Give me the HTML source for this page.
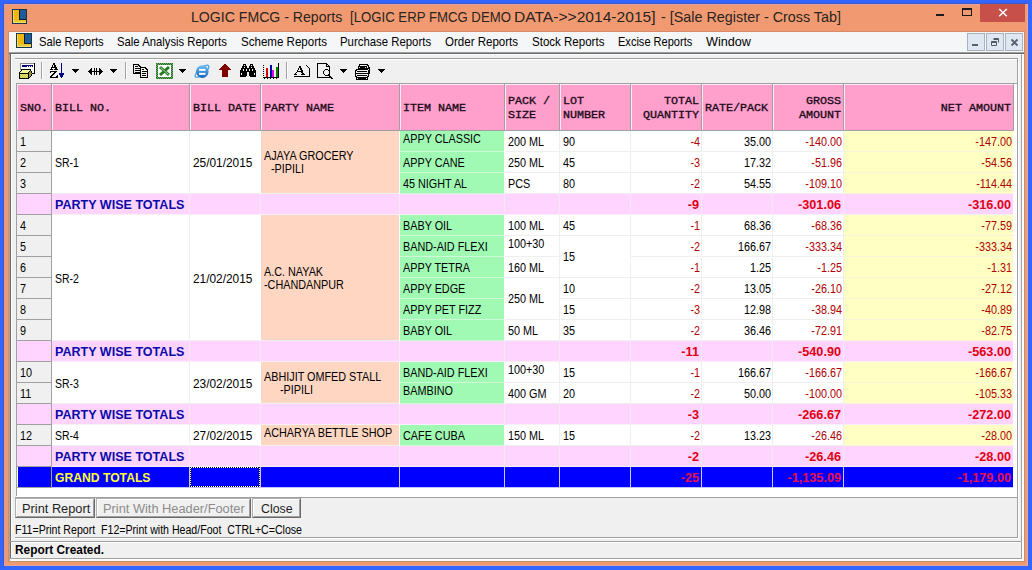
<!DOCTYPE html>
<html><head><meta charset="utf-8"><style>
html,body{margin:0;padding:0;width:1032px;height:570px;overflow:hidden;position:relative;}
body{font-family:'Liberation Sans', sans-serif;}
</style></head><body>
<div style="position:absolute;left:0px;top:0px;width:1032px;height:570px;background:#3366ff"></div>
<div style="position:absolute;left:4px;top:4px;width:1024px;height:562px;background:#f19a72"></div>
<div style="position:absolute;left:3px;top:3px;width:1026px;height:1px;background:#3c5ccc"></div>
<div style="position:absolute;left:3px;top:3px;width:1px;height:564px;background:#3c5ccc"></div>
<div style="position:absolute;left:4px;top:4px;width:1024px;height:1px;background:#e0a0a8"></div>
<div style="position:absolute;left:4px;top:4px;width:1px;height:562px;background:#d89aa8"></div>
<div style="position:absolute;left:1027px;top:4px;width:1px;height:562px;background:#e8a8a0"></div>
<div style="position:absolute;left:4px;top:565px;width:1024px;height:1px;background:#e0a8a8"></div>
<div style="position:absolute;left:190.6px;top:8.06px;line-height:17px;font-family:'Liberation Sans', sans-serif;font-size:15.4px;font-weight:normal;color:#2a2420;white-space:pre;transform:scaleX(0.9161);transform-origin:0 0;">LOGIC FMCG - Reports</div>
<div style="position:absolute;left:349.5px;top:8.06px;line-height:17px;font-family:'Liberation Sans', sans-serif;font-size:15.4px;font-weight:normal;color:#2a2420;white-space:pre;transform:scaleX(0.8567);transform-origin:0 0;">[LOGIC ERP FMCG DEMO </div>
<div style="position:absolute;left:514.0px;top:8.06px;line-height:17px;font-family:'Liberation Sans', sans-serif;font-size:15.4px;font-weight:normal;color:#2a2420;white-space:pre;transform:scaleX(1.0132);transform-origin:0 0;">DATA-&gt;&gt;2014-2015]</div>
<div style="position:absolute;left:660.6px;top:8.06px;line-height:17px;font-family:'Liberation Sans', sans-serif;font-size:15.4px;font-weight:normal;color:#2a2420;white-space:pre;transform:scaleX(0.9325);transform-origin:0 0;">- [Sale Register - Cross Tab]</div>
<div style="position:absolute;left:936px;top:14px;width:8px;height:2px;background:#1a1a1a"></div>
<div style="position:absolute;left:962px;top:8px;width:10px;height:8px;border:1px solid #1a1a1a;box-sizing:border-box;border-top-width:2px"></div>
<div style="position:absolute;left:980px;top:4px;width:45px;height:18px;background:#c8504a"></div>
<svg style="position:absolute;left:998px;top:8px" width="10" height="9" viewBox="0 0 10 9"><path d="M1.2 1 L8.8 8.2 M8.8 1 L1.2 8.2" stroke="#fff" stroke-width="1.5"/></svg>
<div style="position:absolute;left:8px;top:31px;width:1016px;height:1px;background:#d98a68"></div>
<div style="position:absolute;left:9px;top:32px;width:1015px;height:20px;background:#f5f6f7"></div>
<div style="position:absolute;left:38.5px;top:35.36px;line-height:14px;font-family:'Liberation Sans', sans-serif;font-size:12.8px;font-weight:normal;color:#000000;white-space:pre;transform:scaleX(0.8732);transform-origin:0 0;">Sale Reports</div>
<div style="position:absolute;left:116.9px;top:35.36px;line-height:14px;font-family:'Liberation Sans', sans-serif;font-size:12.8px;font-weight:normal;color:#000000;white-space:pre;transform:scaleX(0.8828);transform-origin:0 0;">Sale Analysis Reports</div>
<div style="position:absolute;left:240.5px;top:35.36px;line-height:14px;font-family:'Liberation Sans', sans-serif;font-size:12.8px;font-weight:normal;color:#000000;white-space:pre;transform:scaleX(0.9023);transform-origin:0 0;">Scheme Reports</div>
<div style="position:absolute;left:340.0px;top:35.36px;line-height:14px;font-family:'Liberation Sans', sans-serif;font-size:12.8px;font-weight:normal;color:#000000;white-space:pre;transform:scaleX(0.8893);transform-origin:0 0;">Purchase Reports</div>
<div style="position:absolute;left:445.2px;top:35.36px;line-height:14px;font-family:'Liberation Sans', sans-serif;font-size:12.8px;font-weight:normal;color:#000000;white-space:pre;transform:scaleX(0.9016);transform-origin:0 0;">Order Reports</div>
<div style="position:absolute;left:531.7px;top:35.36px;line-height:14px;font-family:'Liberation Sans', sans-serif;font-size:12.8px;font-weight:normal;color:#000000;white-space:pre;transform:scaleX(0.9008);transform-origin:0 0;">Stock Reports</div>
<div style="position:absolute;left:617.7px;top:35.36px;line-height:14px;font-family:'Liberation Sans', sans-serif;font-size:12.8px;font-weight:normal;color:#000000;white-space:pre;transform:scaleX(0.8633);transform-origin:0 0;">Excise Reports</div>
<div style="position:absolute;left:705.6px;top:35.36px;line-height:14px;font-family:'Liberation Sans', sans-serif;font-size:12.8px;font-weight:normal;color:#000000;white-space:pre;transform:scaleX(0.9865);transform-origin:0 0;">Window</div>
<div style="position:absolute;left:967px;top:33px;width:18px;height:18px;background:#dfe8f2;border:1px solid #a9b3bf;box-sizing:border-box"></div>
<div style="position:absolute;left:986px;top:33px;width:18px;height:18px;background:#dfe8f2;border:1px solid #a9b3bf;box-sizing:border-box"></div>
<div style="position:absolute;left:1005px;top:33px;width:18px;height:18px;background:#dfe8f2;border:1px solid #a9b3bf;box-sizing:border-box"></div>
<div style="position:absolute;left:972px;top:44px;width:6px;height:2px;background:#566070"></div>
<svg style="position:absolute;left:990px;top:37px" width="10" height="10" viewBox="0 0 10 10"><path d="M3.5 1.5 H8.5 V5.5 M1.5 4.5 H6.5 V8.5 H1.5 Z M1.5 5.5 H6.5 M3.5 2.5 H8.5" fill="none" stroke="#505a66" stroke-width="1"/></svg>
<svg style="position:absolute;left:1010px;top:38px" width="9" height="9" viewBox="0 0 9 9"><path d="M1.5 1.5 L7.5 7.5 M7.5 1.5 L1.5 7.5" stroke="#566070" stroke-width="1.8"/></svg>
<div style="position:absolute;left:8px;top:52px;width:1016px;height:510px;background:#f0f0f0"></div>
<div style="position:absolute;left:8px;top:31px;width:1px;height:531px;background:#c89070"></div>
<div style="position:absolute;left:9px;top:53px;width:1px;height:509px;background:#b4a49a"></div>
<div style="position:absolute;left:1024px;top:31px;width:1px;height:531px;background:#c89070"></div>
<div style="position:absolute;left:8px;top:561px;width:1017px;height:1px;background:#c89070"></div>
<div style="position:absolute;left:8px;top:52px;width:1016px;height:1px;background:#a0a0a0"></div>
<div style="position:absolute;left:9px;top:53px;width:1015px;height:1px;background:#696969"></div>
<div style="position:absolute;left:10px;top:53px;width:1px;height:506px;background:#696969"></div>
<div style="position:absolute;left:11px;top:54px;width:1px;height:504px;background:#ffffff"></div>
<div style="position:absolute;left:11px;top:54px;width:1013px;height:1px;background:#ffffff"></div>
<div style="position:absolute;left:1021px;top:54px;width:1px;height:505px;background:#a0a0a0"></div>
<div style="position:absolute;left:1022px;top:54px;width:2px;height:507px;background:#ffffff"></div>
<div style="position:absolute;left:10px;top:558px;width:1012px;height:1px;background:#a0a0a0"></div>
<div style="position:absolute;left:10px;top:559px;width:1014px;height:2px;background:#ffffff"></div>
<div style="position:absolute;left:15px;top:58px;width:1002px;height:1px;background:#a0a0a0"></div>
<div style="position:absolute;left:15px;top:59px;width:1002px;height:1px;background:#ffffff"></div>
<div style="position:absolute;left:1017px;top:58px;width:1px;height:480px;background:#a0a0a0"></div>
<div style="position:absolute;left:1018px;top:58px;width:1px;height:481px;background:#ffffff"></div>
<div style="position:absolute;left:15px;top:537px;width:1003px;height:1px;background:#a0a0a0"></div>
<div style="position:absolute;left:15px;top:538px;width:1003px;height:1px;background:#ffffff"></div>
<div style="position:absolute;left:16px;top:83px;width:1001px;height:414px;background:#ffffff"></div>
<div style="position:absolute;left:16px;top:83px;width:1001px;height:1px;background:#a0a0a0"></div>
<div style="position:absolute;left:16px;top:83px;width:1px;height:413px;background:#a0a0a0"></div>
<div style="position:absolute;left:15px;top:497px;width:1002px;height:1px;background:#a0a0a0"></div>
<div style="position:absolute;left:17px;top:84px;width:34px;height:46px;background:#ffa0cc"></div>
<div style="position:absolute;left:17px;top:84px;width:34px;height:1px;background:#ffe9f4"></div>
<div style="position:absolute;left:17px;top:84px;width:1px;height:46px;background:#ffe9f4"></div>
<div style="position:absolute;left:51px;top:83px;width:1px;height:48px;background:#a0a0a0"></div>
<div style="position:absolute;left:52px;top:84px;width:137px;height:46px;background:#ffa0cc"></div>
<div style="position:absolute;left:52px;top:84px;width:137px;height:1px;background:#ffe9f4"></div>
<div style="position:absolute;left:52px;top:84px;width:1px;height:46px;background:#ffe9f4"></div>
<div style="position:absolute;left:189px;top:83px;width:1px;height:48px;background:#a0a0a0"></div>
<div style="position:absolute;left:190px;top:84px;width:70px;height:46px;background:#ffa0cc"></div>
<div style="position:absolute;left:190px;top:84px;width:70px;height:1px;background:#ffe9f4"></div>
<div style="position:absolute;left:190px;top:84px;width:1px;height:46px;background:#ffe9f4"></div>
<div style="position:absolute;left:260px;top:83px;width:1px;height:48px;background:#a0a0a0"></div>
<div style="position:absolute;left:261px;top:84px;width:138px;height:46px;background:#ffa0cc"></div>
<div style="position:absolute;left:261px;top:84px;width:138px;height:1px;background:#ffe9f4"></div>
<div style="position:absolute;left:261px;top:84px;width:1px;height:46px;background:#ffe9f4"></div>
<div style="position:absolute;left:399px;top:83px;width:1px;height:48px;background:#a0a0a0"></div>
<div style="position:absolute;left:400px;top:84px;width:104px;height:46px;background:#ffa0cc"></div>
<div style="position:absolute;left:400px;top:84px;width:104px;height:1px;background:#ffe9f4"></div>
<div style="position:absolute;left:400px;top:84px;width:1px;height:46px;background:#ffe9f4"></div>
<div style="position:absolute;left:504px;top:83px;width:1px;height:48px;background:#a0a0a0"></div>
<div style="position:absolute;left:505px;top:84px;width:54px;height:46px;background:#ffa0cc"></div>
<div style="position:absolute;left:505px;top:84px;width:54px;height:1px;background:#ffe9f4"></div>
<div style="position:absolute;left:505px;top:84px;width:1px;height:46px;background:#ffe9f4"></div>
<div style="position:absolute;left:559px;top:83px;width:1px;height:48px;background:#a0a0a0"></div>
<div style="position:absolute;left:560px;top:84px;width:70px;height:46px;background:#ffa0cc"></div>
<div style="position:absolute;left:560px;top:84px;width:70px;height:1px;background:#ffe9f4"></div>
<div style="position:absolute;left:560px;top:84px;width:1px;height:46px;background:#ffe9f4"></div>
<div style="position:absolute;left:630px;top:83px;width:1px;height:48px;background:#a0a0a0"></div>
<div style="position:absolute;left:631px;top:84px;width:70px;height:46px;background:#ffa0cc"></div>
<div style="position:absolute;left:631px;top:84px;width:70px;height:1px;background:#ffe9f4"></div>
<div style="position:absolute;left:631px;top:84px;width:1px;height:46px;background:#ffe9f4"></div>
<div style="position:absolute;left:701px;top:83px;width:1px;height:48px;background:#a0a0a0"></div>
<div style="position:absolute;left:702px;top:84px;width:70px;height:46px;background:#ffa0cc"></div>
<div style="position:absolute;left:702px;top:84px;width:70px;height:1px;background:#ffe9f4"></div>
<div style="position:absolute;left:702px;top:84px;width:1px;height:46px;background:#ffe9f4"></div>
<div style="position:absolute;left:772px;top:83px;width:1px;height:48px;background:#a0a0a0"></div>
<div style="position:absolute;left:773px;top:84px;width:70px;height:46px;background:#ffa0cc"></div>
<div style="position:absolute;left:773px;top:84px;width:70px;height:1px;background:#ffe9f4"></div>
<div style="position:absolute;left:773px;top:84px;width:1px;height:46px;background:#ffe9f4"></div>
<div style="position:absolute;left:843px;top:83px;width:1px;height:48px;background:#a0a0a0"></div>
<div style="position:absolute;left:844px;top:84px;width:169px;height:46px;background:#ffa0cc"></div>
<div style="position:absolute;left:844px;top:84px;width:169px;height:1px;background:#ffe9f4"></div>
<div style="position:absolute;left:844px;top:84px;width:1px;height:46px;background:#ffe9f4"></div>
<div style="position:absolute;left:1013px;top:83px;width:1px;height:48px;background:#a0a0a0"></div>
<div style="position:absolute;left:17px;top:130px;width:996px;height:1px;background:#a0a0a0"></div>
<div style="position:absolute;left:20px;top:102.39px;line-height:13px;font-family:'Liberation Mono', monospace;font-size:11.7px;font-weight:normal;color:#1a0a18;white-space:pre;-webkit-text-stroke:0.35px #1a0a18">SNO.</div>
<div style="position:absolute;left:55px;top:102.39px;line-height:13px;font-family:'Liberation Mono', monospace;font-size:11.7px;font-weight:normal;color:#1a0a18;white-space:pre;-webkit-text-stroke:0.35px #1a0a18">BILL NO.</div>
<div style="position:absolute;left:193px;top:102.39px;line-height:13px;font-family:'Liberation Mono', monospace;font-size:11.7px;font-weight:normal;color:#1a0a18;white-space:pre;-webkit-text-stroke:0.35px #1a0a18">BILL DATE</div>
<div style="position:absolute;left:264px;top:102.39px;line-height:13px;font-family:'Liberation Mono', monospace;font-size:11.7px;font-weight:normal;color:#1a0a18;white-space:pre;-webkit-text-stroke:0.35px #1a0a18">PARTY NAME</div>
<div style="position:absolute;left:403px;top:102.39px;line-height:13px;font-family:'Liberation Mono', monospace;font-size:11.7px;font-weight:normal;color:#1a0a18;white-space:pre;-webkit-text-stroke:0.35px #1a0a18">ITEM NAME</div>
<div style="position:absolute;left:508px;top:95.39px;line-height:13px;font-family:'Liberation Mono', monospace;font-size:11.7px;font-weight:normal;color:#1a0a18;white-space:pre;-webkit-text-stroke:0.35px #1a0a18">PACK /</div>
<div style="position:absolute;left:508px;top:108.89px;line-height:13px;font-family:'Liberation Mono', monospace;font-size:11.7px;font-weight:normal;color:#1a0a18;white-space:pre;-webkit-text-stroke:0.35px #1a0a18">SIZE</div>
<div style="position:absolute;left:563px;top:95.39px;line-height:13px;font-family:'Liberation Mono', monospace;font-size:11.7px;font-weight:normal;color:#1a0a18;white-space:pre;-webkit-text-stroke:0.35px #1a0a18">LOT</div>
<div style="position:absolute;left:563px;top:108.89px;line-height:13px;font-family:'Liberation Mono', monospace;font-size:11.7px;font-weight:normal;color:#1a0a18;white-space:pre;-webkit-text-stroke:0.35px #1a0a18">NUMBER</div>
<div style="position:absolute;left:299px;width:400px;text-align:right;top:95.39px;line-height:13px;font-family:'Liberation Mono', monospace;font-size:11.7px;font-weight:normal;color:#1a0a18;white-space:pre;-webkit-text-stroke:0.35px #1a0a18">TOTAL</div>
<div style="position:absolute;left:299px;width:400px;text-align:right;top:108.89px;line-height:13px;font-family:'Liberation Mono', monospace;font-size:11.7px;font-weight:normal;color:#1a0a18;white-space:pre;-webkit-text-stroke:0.35px #1a0a18">QUANTITY</div>
<div style="position:absolute;left:705px;top:102.39px;line-height:13px;font-family:'Liberation Mono', monospace;font-size:11.7px;font-weight:normal;color:#1a0a18;white-space:pre;-webkit-text-stroke:0.35px #1a0a18">RATE/PACK</div>
<div style="position:absolute;left:441px;width:400px;text-align:right;top:95.39px;line-height:13px;font-family:'Liberation Mono', monospace;font-size:11.7px;font-weight:normal;color:#1a0a18;white-space:pre;-webkit-text-stroke:0.35px #1a0a18">GROSS</div>
<div style="position:absolute;left:441px;width:400px;text-align:right;top:108.89px;line-height:13px;font-family:'Liberation Mono', monospace;font-size:11.7px;font-weight:normal;color:#1a0a18;white-space:pre;-webkit-text-stroke:0.35px #1a0a18">AMOUNT</div>
<div style="position:absolute;left:611px;width:400px;text-align:right;top:102.39px;line-height:13px;font-family:'Liberation Mono', monospace;font-size:11.7px;font-weight:normal;color:#1a0a18;white-space:pre;-webkit-text-stroke:0.35px #1a0a18">NET AMOUNT</div>
<div style="position:absolute;left:17px;top:131px;width:34px;height:20px;background:#f0f0f0"></div>
<div style="position:absolute;left:844px;top:131px;width:169px;height:20px;background:#ffffc4"></div>
<div style="position:absolute;left:559px;top:131px;width:1px;height:21px;background:#efefef"></div>
<div style="position:absolute;left:630px;top:131px;width:1px;height:21px;background:#efefef"></div>
<div style="position:absolute;left:701px;top:131px;width:1px;height:21px;background:#efefef"></div>
<div style="position:absolute;left:772px;top:131px;width:1px;height:21px;background:#efefef"></div>
<div style="position:absolute;left:843px;top:131px;width:1px;height:21px;background:#efefef"></div>
<div style="position:absolute;left:17px;top:151px;width:35px;height:1px;background:#a0a0a0"></div>
<div style="position:absolute;left:51px;top:131px;width:1px;height:21px;background:#a0a0a0"></div>
<div style="position:absolute;left:400px;top:131px;width:104px;height:20px;background:#a0fab4"></div>
<div style="position:absolute;left:400px;top:151px;width:104px;height:1px;background:#cff8d6"></div>
<div style="position:absolute;left:631px;top:151px;width:383px;height:1px;background:#efefef"></div>
<div style="position:absolute;left:844px;top:151px;width:169px;height:1px;background:#f6f6dc"></div>
<div style="position:absolute;left:20px;top:134.67px;line-height:14px;font-family:'Liberation Sans', sans-serif;font-size:12.5px;font-weight:normal;color:#000;white-space:pre;transform:scaleX(0.865);transform-origin:0 0;">1</div>
<div style="position:absolute;left:403px;top:131.67px;line-height:14px;font-family:'Liberation Sans', sans-serif;font-size:12.5px;font-weight:normal;color:#000;white-space:pre;transform:scaleX(0.865);transform-origin:0 0;">APPY CLASSIC</div>
<div style="position:absolute;left:300px;width:400px;text-align:right;top:134.67px;line-height:14px;font-family:'Liberation Sans', sans-serif;font-size:12.5px;font-weight:normal;color:#b00000;white-space:pre;transform:scaleX(0.865);transform-origin:100% 0;">-4</div>
<div style="position:absolute;left:371px;width:400px;text-align:right;top:134.67px;line-height:14px;font-family:'Liberation Sans', sans-serif;font-size:12.5px;font-weight:normal;color:#000;white-space:pre;transform:scaleX(0.865);transform-origin:100% 0;">35.00</div>
<div style="position:absolute;left:442px;width:400px;text-align:right;top:134.67px;line-height:14px;font-family:'Liberation Sans', sans-serif;font-size:12.5px;font-weight:normal;color:#b00000;white-space:pre;transform:scaleX(0.865);transform-origin:100% 0;">-140.00</div>
<div style="position:absolute;left:612px;width:400px;text-align:right;top:134.67px;line-height:14px;font-family:'Liberation Sans', sans-serif;font-size:12.5px;font-weight:normal;color:#b00000;white-space:pre;transform:scaleX(0.865);transform-origin:100% 0;">-147.00</div>
<div style="position:absolute;left:17px;top:152px;width:34px;height:20px;background:#f0f0f0"></div>
<div style="position:absolute;left:844px;top:152px;width:169px;height:20px;background:#ffffc4"></div>
<div style="position:absolute;left:559px;top:152px;width:1px;height:21px;background:#efefef"></div>
<div style="position:absolute;left:630px;top:152px;width:1px;height:21px;background:#efefef"></div>
<div style="position:absolute;left:701px;top:152px;width:1px;height:21px;background:#efefef"></div>
<div style="position:absolute;left:772px;top:152px;width:1px;height:21px;background:#efefef"></div>
<div style="position:absolute;left:843px;top:152px;width:1px;height:21px;background:#efefef"></div>
<div style="position:absolute;left:17px;top:172px;width:35px;height:1px;background:#a0a0a0"></div>
<div style="position:absolute;left:51px;top:152px;width:1px;height:21px;background:#a0a0a0"></div>
<div style="position:absolute;left:400px;top:152px;width:104px;height:20px;background:#a0fab4"></div>
<div style="position:absolute;left:400px;top:172px;width:104px;height:1px;background:#cff8d6"></div>
<div style="position:absolute;left:631px;top:172px;width:383px;height:1px;background:#efefef"></div>
<div style="position:absolute;left:844px;top:172px;width:169px;height:1px;background:#f6f6dc"></div>
<div style="position:absolute;left:20px;top:155.67px;line-height:14px;font-family:'Liberation Sans', sans-serif;font-size:12.5px;font-weight:normal;color:#000;white-space:pre;transform:scaleX(0.865);transform-origin:0 0;">2</div>
<div style="position:absolute;left:403px;top:156.27px;line-height:14px;font-family:'Liberation Sans', sans-serif;font-size:12.5px;font-weight:normal;color:#000;white-space:pre;transform:scaleX(0.865);transform-origin:0 0;">APPY CANE</div>
<div style="position:absolute;left:300px;width:400px;text-align:right;top:155.67px;line-height:14px;font-family:'Liberation Sans', sans-serif;font-size:12.5px;font-weight:normal;color:#b00000;white-space:pre;transform:scaleX(0.865);transform-origin:100% 0;">-3</div>
<div style="position:absolute;left:371px;width:400px;text-align:right;top:155.67px;line-height:14px;font-family:'Liberation Sans', sans-serif;font-size:12.5px;font-weight:normal;color:#000;white-space:pre;transform:scaleX(0.865);transform-origin:100% 0;">17.32</div>
<div style="position:absolute;left:442px;width:400px;text-align:right;top:155.67px;line-height:14px;font-family:'Liberation Sans', sans-serif;font-size:12.5px;font-weight:normal;color:#b00000;white-space:pre;transform:scaleX(0.865);transform-origin:100% 0;">-51.96</div>
<div style="position:absolute;left:612px;width:400px;text-align:right;top:155.67px;line-height:14px;font-family:'Liberation Sans', sans-serif;font-size:12.5px;font-weight:normal;color:#b00000;white-space:pre;transform:scaleX(0.865);transform-origin:100% 0;">-54.56</div>
<div style="position:absolute;left:17px;top:173px;width:34px;height:20px;background:#f0f0f0"></div>
<div style="position:absolute;left:844px;top:173px;width:169px;height:20px;background:#ffffc4"></div>
<div style="position:absolute;left:559px;top:173px;width:1px;height:21px;background:#efefef"></div>
<div style="position:absolute;left:630px;top:173px;width:1px;height:21px;background:#efefef"></div>
<div style="position:absolute;left:701px;top:173px;width:1px;height:21px;background:#efefef"></div>
<div style="position:absolute;left:772px;top:173px;width:1px;height:21px;background:#efefef"></div>
<div style="position:absolute;left:843px;top:173px;width:1px;height:21px;background:#efefef"></div>
<div style="position:absolute;left:17px;top:193px;width:35px;height:1px;background:#a0a0a0"></div>
<div style="position:absolute;left:51px;top:173px;width:1px;height:21px;background:#a0a0a0"></div>
<div style="position:absolute;left:400px;top:173px;width:104px;height:20px;background:#a0fab4"></div>
<div style="position:absolute;left:400px;top:193px;width:104px;height:1px;background:#cff8d6"></div>
<div style="position:absolute;left:631px;top:193px;width:383px;height:1px;background:#efefef"></div>
<div style="position:absolute;left:844px;top:193px;width:169px;height:1px;background:#f6f6dc"></div>
<div style="position:absolute;left:20px;top:176.67px;line-height:14px;font-family:'Liberation Sans', sans-serif;font-size:12.5px;font-weight:normal;color:#000;white-space:pre;transform:scaleX(0.865);transform-origin:0 0;">3</div>
<div style="position:absolute;left:403px;top:177.27px;line-height:14px;font-family:'Liberation Sans', sans-serif;font-size:12.5px;font-weight:normal;color:#000;white-space:pre;transform:scaleX(0.865);transform-origin:0 0;">45 NIGHT AL</div>
<div style="position:absolute;left:300px;width:400px;text-align:right;top:176.67px;line-height:14px;font-family:'Liberation Sans', sans-serif;font-size:12.5px;font-weight:normal;color:#b00000;white-space:pre;transform:scaleX(0.865);transform-origin:100% 0;">-2</div>
<div style="position:absolute;left:371px;width:400px;text-align:right;top:176.67px;line-height:14px;font-family:'Liberation Sans', sans-serif;font-size:12.5px;font-weight:normal;color:#000;white-space:pre;transform:scaleX(0.865);transform-origin:100% 0;">54.55</div>
<div style="position:absolute;left:442px;width:400px;text-align:right;top:176.67px;line-height:14px;font-family:'Liberation Sans', sans-serif;font-size:12.5px;font-weight:normal;color:#b00000;white-space:pre;transform:scaleX(0.865);transform-origin:100% 0;">-109.10</div>
<div style="position:absolute;left:612px;width:400px;text-align:right;top:176.67px;line-height:14px;font-family:'Liberation Sans', sans-serif;font-size:12.5px;font-weight:normal;color:#b00000;white-space:pre;transform:scaleX(0.865);transform-origin:100% 0;">-114.44</div>
<div style="position:absolute;left:17px;top:194px;width:996px;height:20px;background:#ffd4ff"></div>
<div style="position:absolute;left:17px;top:214px;width:996px;height:1px;background:#f8f0f8"></div>
<div style="position:absolute;left:51px;top:194px;width:1px;height:21px;background:#a0a0a0"></div>
<div style="position:absolute;left:189px;top:194px;width:1px;height:21px;background:#f4e8f4"></div>
<div style="position:absolute;left:260px;top:194px;width:1px;height:21px;background:#f4e8f4"></div>
<div style="position:absolute;left:399px;top:194px;width:1px;height:21px;background:#f4e8f4"></div>
<div style="position:absolute;left:504px;top:194px;width:1px;height:21px;background:#f4e8f4"></div>
<div style="position:absolute;left:559px;top:194px;width:1px;height:21px;background:#f4e8f4"></div>
<div style="position:absolute;left:630px;top:194px;width:1px;height:21px;background:#f4e8f4"></div>
<div style="position:absolute;left:701px;top:194px;width:1px;height:21px;background:#f4e8f4"></div>
<div style="position:absolute;left:772px;top:194px;width:1px;height:21px;background:#f4e8f4"></div>
<div style="position:absolute;left:843px;top:194px;width:1px;height:21px;background:#f4e8f4"></div>
<div style="position:absolute;left:17px;top:214px;width:35px;height:1px;background:#a0a0a0"></div>
<div style="position:absolute;left:54.8px;top:196.80px;line-height:15px;font-family:'Liberation Sans', sans-serif;font-size:13px;font-weight:bold;color:#0a0aa8;white-space:pre;transform:scaleX(0.965);transform-origin:0 0;">PARTY WISE TOTALS</div>
<div style="position:absolute;left:298.5px;width:400px;text-align:right;top:197.00px;line-height:15px;font-family:'Liberation Sans', sans-serif;font-size:13px;font-weight:bold;color:#e00010;white-space:pre;transform:scaleX(0.975);transform-origin:100% 0;">-9</div>
<div style="position:absolute;left:440.5px;width:400px;text-align:right;top:197.00px;line-height:15px;font-family:'Liberation Sans', sans-serif;font-size:13px;font-weight:bold;color:#e00010;white-space:pre;transform:scaleX(0.975);transform-origin:100% 0;">-301.06</div>
<div style="position:absolute;left:610.5px;width:400px;text-align:right;top:197.00px;line-height:15px;font-family:'Liberation Sans', sans-serif;font-size:13px;font-weight:bold;color:#e00010;white-space:pre;transform:scaleX(0.975);transform-origin:100% 0;">-316.00</div>
<div style="position:absolute;left:17px;top:215px;width:34px;height:20px;background:#f0f0f0"></div>
<div style="position:absolute;left:844px;top:215px;width:169px;height:20px;background:#ffffc4"></div>
<div style="position:absolute;left:559px;top:215px;width:1px;height:21px;background:#efefef"></div>
<div style="position:absolute;left:630px;top:215px;width:1px;height:21px;background:#efefef"></div>
<div style="position:absolute;left:701px;top:215px;width:1px;height:21px;background:#efefef"></div>
<div style="position:absolute;left:772px;top:215px;width:1px;height:21px;background:#efefef"></div>
<div style="position:absolute;left:843px;top:215px;width:1px;height:21px;background:#efefef"></div>
<div style="position:absolute;left:17px;top:235px;width:35px;height:1px;background:#a0a0a0"></div>
<div style="position:absolute;left:51px;top:215px;width:1px;height:21px;background:#a0a0a0"></div>
<div style="position:absolute;left:400px;top:215px;width:104px;height:20px;background:#a0fab4"></div>
<div style="position:absolute;left:400px;top:235px;width:104px;height:1px;background:#cff8d6"></div>
<div style="position:absolute;left:631px;top:235px;width:383px;height:1px;background:#efefef"></div>
<div style="position:absolute;left:844px;top:235px;width:169px;height:1px;background:#f6f6dc"></div>
<div style="position:absolute;left:20px;top:218.67px;line-height:14px;font-family:'Liberation Sans', sans-serif;font-size:12.5px;font-weight:normal;color:#000;white-space:pre;transform:scaleX(0.865);transform-origin:0 0;">4</div>
<div style="position:absolute;left:403px;top:219.27px;line-height:14px;font-family:'Liberation Sans', sans-serif;font-size:12.5px;font-weight:normal;color:#000;white-space:pre;transform:scaleX(0.865);transform-origin:0 0;">BABY OIL</div>
<div style="position:absolute;left:300px;width:400px;text-align:right;top:218.67px;line-height:14px;font-family:'Liberation Sans', sans-serif;font-size:12.5px;font-weight:normal;color:#b00000;white-space:pre;transform:scaleX(0.865);transform-origin:100% 0;">-1</div>
<div style="position:absolute;left:371px;width:400px;text-align:right;top:218.67px;line-height:14px;font-family:'Liberation Sans', sans-serif;font-size:12.5px;font-weight:normal;color:#000;white-space:pre;transform:scaleX(0.865);transform-origin:100% 0;">68.36</div>
<div style="position:absolute;left:442px;width:400px;text-align:right;top:218.67px;line-height:14px;font-family:'Liberation Sans', sans-serif;font-size:12.5px;font-weight:normal;color:#b00000;white-space:pre;transform:scaleX(0.865);transform-origin:100% 0;">-68.36</div>
<div style="position:absolute;left:612px;width:400px;text-align:right;top:218.67px;line-height:14px;font-family:'Liberation Sans', sans-serif;font-size:12.5px;font-weight:normal;color:#b00000;white-space:pre;transform:scaleX(0.865);transform-origin:100% 0;">-77.59</div>
<div style="position:absolute;left:17px;top:236px;width:34px;height:20px;background:#f0f0f0"></div>
<div style="position:absolute;left:844px;top:236px;width:169px;height:20px;background:#ffffc4"></div>
<div style="position:absolute;left:559px;top:236px;width:1px;height:21px;background:#efefef"></div>
<div style="position:absolute;left:630px;top:236px;width:1px;height:21px;background:#efefef"></div>
<div style="position:absolute;left:701px;top:236px;width:1px;height:21px;background:#efefef"></div>
<div style="position:absolute;left:772px;top:236px;width:1px;height:21px;background:#efefef"></div>
<div style="position:absolute;left:843px;top:236px;width:1px;height:21px;background:#efefef"></div>
<div style="position:absolute;left:17px;top:256px;width:35px;height:1px;background:#a0a0a0"></div>
<div style="position:absolute;left:51px;top:236px;width:1px;height:21px;background:#a0a0a0"></div>
<div style="position:absolute;left:400px;top:236px;width:104px;height:20px;background:#a0fab4"></div>
<div style="position:absolute;left:400px;top:256px;width:104px;height:1px;background:#cff8d6"></div>
<div style="position:absolute;left:631px;top:256px;width:383px;height:1px;background:#efefef"></div>
<div style="position:absolute;left:844px;top:256px;width:169px;height:1px;background:#f6f6dc"></div>
<div style="position:absolute;left:20px;top:239.67px;line-height:14px;font-family:'Liberation Sans', sans-serif;font-size:12.5px;font-weight:normal;color:#000;white-space:pre;transform:scaleX(0.865);transform-origin:0 0;">5</div>
<div style="position:absolute;left:403px;top:240.27px;line-height:14px;font-family:'Liberation Sans', sans-serif;font-size:12.5px;font-weight:normal;color:#000;white-space:pre;transform:scaleX(0.865);transform-origin:0 0;">BAND-AID FLEXI</div>
<div style="position:absolute;left:300px;width:400px;text-align:right;top:239.67px;line-height:14px;font-family:'Liberation Sans', sans-serif;font-size:12.5px;font-weight:normal;color:#b00000;white-space:pre;transform:scaleX(0.865);transform-origin:100% 0;">-2</div>
<div style="position:absolute;left:371px;width:400px;text-align:right;top:239.67px;line-height:14px;font-family:'Liberation Sans', sans-serif;font-size:12.5px;font-weight:normal;color:#000;white-space:pre;transform:scaleX(0.865);transform-origin:100% 0;">166.67</div>
<div style="position:absolute;left:442px;width:400px;text-align:right;top:239.67px;line-height:14px;font-family:'Liberation Sans', sans-serif;font-size:12.5px;font-weight:normal;color:#b00000;white-space:pre;transform:scaleX(0.865);transform-origin:100% 0;">-333.34</div>
<div style="position:absolute;left:612px;width:400px;text-align:right;top:239.67px;line-height:14px;font-family:'Liberation Sans', sans-serif;font-size:12.5px;font-weight:normal;color:#b00000;white-space:pre;transform:scaleX(0.865);transform-origin:100% 0;">-333.34</div>
<div style="position:absolute;left:17px;top:257px;width:34px;height:20px;background:#f0f0f0"></div>
<div style="position:absolute;left:844px;top:257px;width:169px;height:20px;background:#ffffc4"></div>
<div style="position:absolute;left:559px;top:257px;width:1px;height:21px;background:#efefef"></div>
<div style="position:absolute;left:630px;top:257px;width:1px;height:21px;background:#efefef"></div>
<div style="position:absolute;left:701px;top:257px;width:1px;height:21px;background:#efefef"></div>
<div style="position:absolute;left:772px;top:257px;width:1px;height:21px;background:#efefef"></div>
<div style="position:absolute;left:843px;top:257px;width:1px;height:21px;background:#efefef"></div>
<div style="position:absolute;left:17px;top:277px;width:35px;height:1px;background:#a0a0a0"></div>
<div style="position:absolute;left:51px;top:257px;width:1px;height:21px;background:#a0a0a0"></div>
<div style="position:absolute;left:400px;top:257px;width:104px;height:20px;background:#a0fab4"></div>
<div style="position:absolute;left:400px;top:277px;width:104px;height:1px;background:#cff8d6"></div>
<div style="position:absolute;left:631px;top:277px;width:383px;height:1px;background:#efefef"></div>
<div style="position:absolute;left:844px;top:277px;width:169px;height:1px;background:#f6f6dc"></div>
<div style="position:absolute;left:20px;top:260.67px;line-height:14px;font-family:'Liberation Sans', sans-serif;font-size:12.5px;font-weight:normal;color:#000;white-space:pre;transform:scaleX(0.865);transform-origin:0 0;">6</div>
<div style="position:absolute;left:403px;top:261.27px;line-height:14px;font-family:'Liberation Sans', sans-serif;font-size:12.5px;font-weight:normal;color:#000;white-space:pre;transform:scaleX(0.865);transform-origin:0 0;">APPY TETRA</div>
<div style="position:absolute;left:300px;width:400px;text-align:right;top:260.67px;line-height:14px;font-family:'Liberation Sans', sans-serif;font-size:12.5px;font-weight:normal;color:#b00000;white-space:pre;transform:scaleX(0.865);transform-origin:100% 0;">-1</div>
<div style="position:absolute;left:371px;width:400px;text-align:right;top:260.67px;line-height:14px;font-family:'Liberation Sans', sans-serif;font-size:12.5px;font-weight:normal;color:#000;white-space:pre;transform:scaleX(0.865);transform-origin:100% 0;">1.25</div>
<div style="position:absolute;left:442px;width:400px;text-align:right;top:260.67px;line-height:14px;font-family:'Liberation Sans', sans-serif;font-size:12.5px;font-weight:normal;color:#b00000;white-space:pre;transform:scaleX(0.865);transform-origin:100% 0;">-1.25</div>
<div style="position:absolute;left:612px;width:400px;text-align:right;top:260.67px;line-height:14px;font-family:'Liberation Sans', sans-serif;font-size:12.5px;font-weight:normal;color:#b00000;white-space:pre;transform:scaleX(0.865);transform-origin:100% 0;">-1.31</div>
<div style="position:absolute;left:17px;top:278px;width:34px;height:20px;background:#f0f0f0"></div>
<div style="position:absolute;left:844px;top:278px;width:169px;height:20px;background:#ffffc4"></div>
<div style="position:absolute;left:559px;top:278px;width:1px;height:21px;background:#efefef"></div>
<div style="position:absolute;left:630px;top:278px;width:1px;height:21px;background:#efefef"></div>
<div style="position:absolute;left:701px;top:278px;width:1px;height:21px;background:#efefef"></div>
<div style="position:absolute;left:772px;top:278px;width:1px;height:21px;background:#efefef"></div>
<div style="position:absolute;left:843px;top:278px;width:1px;height:21px;background:#efefef"></div>
<div style="position:absolute;left:17px;top:298px;width:35px;height:1px;background:#a0a0a0"></div>
<div style="position:absolute;left:51px;top:278px;width:1px;height:21px;background:#a0a0a0"></div>
<div style="position:absolute;left:400px;top:278px;width:104px;height:20px;background:#a0fab4"></div>
<div style="position:absolute;left:400px;top:298px;width:104px;height:1px;background:#cff8d6"></div>
<div style="position:absolute;left:631px;top:298px;width:383px;height:1px;background:#efefef"></div>
<div style="position:absolute;left:844px;top:298px;width:169px;height:1px;background:#f6f6dc"></div>
<div style="position:absolute;left:20px;top:281.67px;line-height:14px;font-family:'Liberation Sans', sans-serif;font-size:12.5px;font-weight:normal;color:#000;white-space:pre;transform:scaleX(0.865);transform-origin:0 0;">7</div>
<div style="position:absolute;left:403px;top:282.27px;line-height:14px;font-family:'Liberation Sans', sans-serif;font-size:12.5px;font-weight:normal;color:#000;white-space:pre;transform:scaleX(0.865);transform-origin:0 0;">APPY EDGE</div>
<div style="position:absolute;left:300px;width:400px;text-align:right;top:281.67px;line-height:14px;font-family:'Liberation Sans', sans-serif;font-size:12.5px;font-weight:normal;color:#b00000;white-space:pre;transform:scaleX(0.865);transform-origin:100% 0;">-2</div>
<div style="position:absolute;left:371px;width:400px;text-align:right;top:281.67px;line-height:14px;font-family:'Liberation Sans', sans-serif;font-size:12.5px;font-weight:normal;color:#000;white-space:pre;transform:scaleX(0.865);transform-origin:100% 0;">13.05</div>
<div style="position:absolute;left:442px;width:400px;text-align:right;top:281.67px;line-height:14px;font-family:'Liberation Sans', sans-serif;font-size:12.5px;font-weight:normal;color:#b00000;white-space:pre;transform:scaleX(0.865);transform-origin:100% 0;">-26.10</div>
<div style="position:absolute;left:612px;width:400px;text-align:right;top:281.67px;line-height:14px;font-family:'Liberation Sans', sans-serif;font-size:12.5px;font-weight:normal;color:#b00000;white-space:pre;transform:scaleX(0.865);transform-origin:100% 0;">-27.12</div>
<div style="position:absolute;left:17px;top:299px;width:34px;height:20px;background:#f0f0f0"></div>
<div style="position:absolute;left:844px;top:299px;width:169px;height:20px;background:#ffffc4"></div>
<div style="position:absolute;left:559px;top:299px;width:1px;height:21px;background:#efefef"></div>
<div style="position:absolute;left:630px;top:299px;width:1px;height:21px;background:#efefef"></div>
<div style="position:absolute;left:701px;top:299px;width:1px;height:21px;background:#efefef"></div>
<div style="position:absolute;left:772px;top:299px;width:1px;height:21px;background:#efefef"></div>
<div style="position:absolute;left:843px;top:299px;width:1px;height:21px;background:#efefef"></div>
<div style="position:absolute;left:17px;top:319px;width:35px;height:1px;background:#a0a0a0"></div>
<div style="position:absolute;left:51px;top:299px;width:1px;height:21px;background:#a0a0a0"></div>
<div style="position:absolute;left:400px;top:299px;width:104px;height:20px;background:#a0fab4"></div>
<div style="position:absolute;left:400px;top:319px;width:104px;height:1px;background:#cff8d6"></div>
<div style="position:absolute;left:631px;top:319px;width:383px;height:1px;background:#efefef"></div>
<div style="position:absolute;left:844px;top:319px;width:169px;height:1px;background:#f6f6dc"></div>
<div style="position:absolute;left:20px;top:302.67px;line-height:14px;font-family:'Liberation Sans', sans-serif;font-size:12.5px;font-weight:normal;color:#000;white-space:pre;transform:scaleX(0.865);transform-origin:0 0;">8</div>
<div style="position:absolute;left:403px;top:303.27px;line-height:14px;font-family:'Liberation Sans', sans-serif;font-size:12.5px;font-weight:normal;color:#000;white-space:pre;transform:scaleX(0.865);transform-origin:0 0;">APPY PET FIZZ</div>
<div style="position:absolute;left:300px;width:400px;text-align:right;top:302.67px;line-height:14px;font-family:'Liberation Sans', sans-serif;font-size:12.5px;font-weight:normal;color:#b00000;white-space:pre;transform:scaleX(0.865);transform-origin:100% 0;">-3</div>
<div style="position:absolute;left:371px;width:400px;text-align:right;top:302.67px;line-height:14px;font-family:'Liberation Sans', sans-serif;font-size:12.5px;font-weight:normal;color:#000;white-space:pre;transform:scaleX(0.865);transform-origin:100% 0;">12.98</div>
<div style="position:absolute;left:442px;width:400px;text-align:right;top:302.67px;line-height:14px;font-family:'Liberation Sans', sans-serif;font-size:12.5px;font-weight:normal;color:#b00000;white-space:pre;transform:scaleX(0.865);transform-origin:100% 0;">-38.94</div>
<div style="position:absolute;left:612px;width:400px;text-align:right;top:302.67px;line-height:14px;font-family:'Liberation Sans', sans-serif;font-size:12.5px;font-weight:normal;color:#b00000;white-space:pre;transform:scaleX(0.865);transform-origin:100% 0;">-40.89</div>
<div style="position:absolute;left:17px;top:320px;width:34px;height:20px;background:#f0f0f0"></div>
<div style="position:absolute;left:844px;top:320px;width:169px;height:20px;background:#ffffc4"></div>
<div style="position:absolute;left:559px;top:320px;width:1px;height:21px;background:#efefef"></div>
<div style="position:absolute;left:630px;top:320px;width:1px;height:21px;background:#efefef"></div>
<div style="position:absolute;left:701px;top:320px;width:1px;height:21px;background:#efefef"></div>
<div style="position:absolute;left:772px;top:320px;width:1px;height:21px;background:#efefef"></div>
<div style="position:absolute;left:843px;top:320px;width:1px;height:21px;background:#efefef"></div>
<div style="position:absolute;left:17px;top:340px;width:35px;height:1px;background:#a0a0a0"></div>
<div style="position:absolute;left:51px;top:320px;width:1px;height:21px;background:#a0a0a0"></div>
<div style="position:absolute;left:400px;top:320px;width:104px;height:20px;background:#a0fab4"></div>
<div style="position:absolute;left:400px;top:340px;width:104px;height:1px;background:#cff8d6"></div>
<div style="position:absolute;left:631px;top:340px;width:383px;height:1px;background:#efefef"></div>
<div style="position:absolute;left:844px;top:340px;width:169px;height:1px;background:#f6f6dc"></div>
<div style="position:absolute;left:20px;top:323.67px;line-height:14px;font-family:'Liberation Sans', sans-serif;font-size:12.5px;font-weight:normal;color:#000;white-space:pre;transform:scaleX(0.865);transform-origin:0 0;">9</div>
<div style="position:absolute;left:403px;top:324.27px;line-height:14px;font-family:'Liberation Sans', sans-serif;font-size:12.5px;font-weight:normal;color:#000;white-space:pre;transform:scaleX(0.865);transform-origin:0 0;">BABY OIL</div>
<div style="position:absolute;left:300px;width:400px;text-align:right;top:323.67px;line-height:14px;font-family:'Liberation Sans', sans-serif;font-size:12.5px;font-weight:normal;color:#b00000;white-space:pre;transform:scaleX(0.865);transform-origin:100% 0;">-2</div>
<div style="position:absolute;left:371px;width:400px;text-align:right;top:323.67px;line-height:14px;font-family:'Liberation Sans', sans-serif;font-size:12.5px;font-weight:normal;color:#000;white-space:pre;transform:scaleX(0.865);transform-origin:100% 0;">36.46</div>
<div style="position:absolute;left:442px;width:400px;text-align:right;top:323.67px;line-height:14px;font-family:'Liberation Sans', sans-serif;font-size:12.5px;font-weight:normal;color:#b00000;white-space:pre;transform:scaleX(0.865);transform-origin:100% 0;">-72.91</div>
<div style="position:absolute;left:612px;width:400px;text-align:right;top:323.67px;line-height:14px;font-family:'Liberation Sans', sans-serif;font-size:12.5px;font-weight:normal;color:#b00000;white-space:pre;transform:scaleX(0.865);transform-origin:100% 0;">-82.75</div>
<div style="position:absolute;left:17px;top:341px;width:996px;height:20px;background:#ffd4ff"></div>
<div style="position:absolute;left:17px;top:361px;width:996px;height:1px;background:#f8f0f8"></div>
<div style="position:absolute;left:51px;top:341px;width:1px;height:21px;background:#a0a0a0"></div>
<div style="position:absolute;left:189px;top:341px;width:1px;height:21px;background:#f4e8f4"></div>
<div style="position:absolute;left:260px;top:341px;width:1px;height:21px;background:#f4e8f4"></div>
<div style="position:absolute;left:399px;top:341px;width:1px;height:21px;background:#f4e8f4"></div>
<div style="position:absolute;left:504px;top:341px;width:1px;height:21px;background:#f4e8f4"></div>
<div style="position:absolute;left:559px;top:341px;width:1px;height:21px;background:#f4e8f4"></div>
<div style="position:absolute;left:630px;top:341px;width:1px;height:21px;background:#f4e8f4"></div>
<div style="position:absolute;left:701px;top:341px;width:1px;height:21px;background:#f4e8f4"></div>
<div style="position:absolute;left:772px;top:341px;width:1px;height:21px;background:#f4e8f4"></div>
<div style="position:absolute;left:843px;top:341px;width:1px;height:21px;background:#f4e8f4"></div>
<div style="position:absolute;left:17px;top:361px;width:35px;height:1px;background:#a0a0a0"></div>
<div style="position:absolute;left:54.8px;top:343.80px;line-height:15px;font-family:'Liberation Sans', sans-serif;font-size:13px;font-weight:bold;color:#0a0aa8;white-space:pre;transform:scaleX(0.965);transform-origin:0 0;">PARTY WISE TOTALS</div>
<div style="position:absolute;left:298.5px;width:400px;text-align:right;top:344.00px;line-height:15px;font-family:'Liberation Sans', sans-serif;font-size:13px;font-weight:bold;color:#e00010;white-space:pre;transform:scaleX(0.975);transform-origin:100% 0;">-11</div>
<div style="position:absolute;left:440.5px;width:400px;text-align:right;top:344.00px;line-height:15px;font-family:'Liberation Sans', sans-serif;font-size:13px;font-weight:bold;color:#e00010;white-space:pre;transform:scaleX(0.975);transform-origin:100% 0;">-540.90</div>
<div style="position:absolute;left:610.5px;width:400px;text-align:right;top:344.00px;line-height:15px;font-family:'Liberation Sans', sans-serif;font-size:13px;font-weight:bold;color:#e00010;white-space:pre;transform:scaleX(0.975);transform-origin:100% 0;">-563.00</div>
<div style="position:absolute;left:17px;top:362px;width:34px;height:20px;background:#f0f0f0"></div>
<div style="position:absolute;left:844px;top:362px;width:169px;height:20px;background:#ffffc4"></div>
<div style="position:absolute;left:559px;top:362px;width:1px;height:21px;background:#efefef"></div>
<div style="position:absolute;left:630px;top:362px;width:1px;height:21px;background:#efefef"></div>
<div style="position:absolute;left:701px;top:362px;width:1px;height:21px;background:#efefef"></div>
<div style="position:absolute;left:772px;top:362px;width:1px;height:21px;background:#efefef"></div>
<div style="position:absolute;left:843px;top:362px;width:1px;height:21px;background:#efefef"></div>
<div style="position:absolute;left:17px;top:382px;width:35px;height:1px;background:#a0a0a0"></div>
<div style="position:absolute;left:51px;top:362px;width:1px;height:21px;background:#a0a0a0"></div>
<div style="position:absolute;left:400px;top:362px;width:104px;height:20px;background:#a0fab4"></div>
<div style="position:absolute;left:400px;top:382px;width:104px;height:1px;background:#cff8d6"></div>
<div style="position:absolute;left:631px;top:382px;width:383px;height:1px;background:#efefef"></div>
<div style="position:absolute;left:844px;top:382px;width:169px;height:1px;background:#f6f6dc"></div>
<div style="position:absolute;left:20px;top:365.67px;line-height:14px;font-family:'Liberation Sans', sans-serif;font-size:12.5px;font-weight:normal;color:#000;white-space:pre;transform:scaleX(0.865);transform-origin:0 0;">10</div>
<div style="position:absolute;left:403px;top:366.27px;line-height:14px;font-family:'Liberation Sans', sans-serif;font-size:12.5px;font-weight:normal;color:#000;white-space:pre;transform:scaleX(0.865);transform-origin:0 0;">BAND-AID FLEXI</div>
<div style="position:absolute;left:300px;width:400px;text-align:right;top:365.67px;line-height:14px;font-family:'Liberation Sans', sans-serif;font-size:12.5px;font-weight:normal;color:#b00000;white-space:pre;transform:scaleX(0.865);transform-origin:100% 0;">-1</div>
<div style="position:absolute;left:371px;width:400px;text-align:right;top:365.67px;line-height:14px;font-family:'Liberation Sans', sans-serif;font-size:12.5px;font-weight:normal;color:#000;white-space:pre;transform:scaleX(0.865);transform-origin:100% 0;">166.67</div>
<div style="position:absolute;left:442px;width:400px;text-align:right;top:365.67px;line-height:14px;font-family:'Liberation Sans', sans-serif;font-size:12.5px;font-weight:normal;color:#b00000;white-space:pre;transform:scaleX(0.865);transform-origin:100% 0;">-166.67</div>
<div style="position:absolute;left:612px;width:400px;text-align:right;top:365.67px;line-height:14px;font-family:'Liberation Sans', sans-serif;font-size:12.5px;font-weight:normal;color:#b00000;white-space:pre;transform:scaleX(0.865);transform-origin:100% 0;">-166.67</div>
<div style="position:absolute;left:17px;top:383px;width:34px;height:20px;background:#f0f0f0"></div>
<div style="position:absolute;left:844px;top:383px;width:169px;height:20px;background:#ffffc4"></div>
<div style="position:absolute;left:559px;top:383px;width:1px;height:21px;background:#efefef"></div>
<div style="position:absolute;left:630px;top:383px;width:1px;height:21px;background:#efefef"></div>
<div style="position:absolute;left:701px;top:383px;width:1px;height:21px;background:#efefef"></div>
<div style="position:absolute;left:772px;top:383px;width:1px;height:21px;background:#efefef"></div>
<div style="position:absolute;left:843px;top:383px;width:1px;height:21px;background:#efefef"></div>
<div style="position:absolute;left:17px;top:403px;width:35px;height:1px;background:#a0a0a0"></div>
<div style="position:absolute;left:51px;top:383px;width:1px;height:21px;background:#a0a0a0"></div>
<div style="position:absolute;left:400px;top:383px;width:104px;height:20px;background:#a0fab4"></div>
<div style="position:absolute;left:400px;top:403px;width:104px;height:1px;background:#cff8d6"></div>
<div style="position:absolute;left:631px;top:403px;width:383px;height:1px;background:#efefef"></div>
<div style="position:absolute;left:844px;top:403px;width:169px;height:1px;background:#f6f6dc"></div>
<div style="position:absolute;left:20px;top:386.67px;line-height:14px;font-family:'Liberation Sans', sans-serif;font-size:12.5px;font-weight:normal;color:#000;white-space:pre;transform:scaleX(0.865);transform-origin:0 0;">11</div>
<div style="position:absolute;left:403px;top:383.67px;line-height:14px;font-family:'Liberation Sans', sans-serif;font-size:12.5px;font-weight:normal;color:#000;white-space:pre;transform:scaleX(0.865);transform-origin:0 0;">BAMBINO</div>
<div style="position:absolute;left:300px;width:400px;text-align:right;top:386.67px;line-height:14px;font-family:'Liberation Sans', sans-serif;font-size:12.5px;font-weight:normal;color:#b00000;white-space:pre;transform:scaleX(0.865);transform-origin:100% 0;">-2</div>
<div style="position:absolute;left:371px;width:400px;text-align:right;top:386.67px;line-height:14px;font-family:'Liberation Sans', sans-serif;font-size:12.5px;font-weight:normal;color:#000;white-space:pre;transform:scaleX(0.865);transform-origin:100% 0;">50.00</div>
<div style="position:absolute;left:442px;width:400px;text-align:right;top:386.67px;line-height:14px;font-family:'Liberation Sans', sans-serif;font-size:12.5px;font-weight:normal;color:#b00000;white-space:pre;transform:scaleX(0.865);transform-origin:100% 0;">-100.00</div>
<div style="position:absolute;left:612px;width:400px;text-align:right;top:386.67px;line-height:14px;font-family:'Liberation Sans', sans-serif;font-size:12.5px;font-weight:normal;color:#b00000;white-space:pre;transform:scaleX(0.865);transform-origin:100% 0;">-105.33</div>
<div style="position:absolute;left:17px;top:404px;width:996px;height:20px;background:#ffd4ff"></div>
<div style="position:absolute;left:17px;top:424px;width:996px;height:1px;background:#f8f0f8"></div>
<div style="position:absolute;left:51px;top:404px;width:1px;height:21px;background:#a0a0a0"></div>
<div style="position:absolute;left:189px;top:404px;width:1px;height:21px;background:#f4e8f4"></div>
<div style="position:absolute;left:260px;top:404px;width:1px;height:21px;background:#f4e8f4"></div>
<div style="position:absolute;left:399px;top:404px;width:1px;height:21px;background:#f4e8f4"></div>
<div style="position:absolute;left:504px;top:404px;width:1px;height:21px;background:#f4e8f4"></div>
<div style="position:absolute;left:559px;top:404px;width:1px;height:21px;background:#f4e8f4"></div>
<div style="position:absolute;left:630px;top:404px;width:1px;height:21px;background:#f4e8f4"></div>
<div style="position:absolute;left:701px;top:404px;width:1px;height:21px;background:#f4e8f4"></div>
<div style="position:absolute;left:772px;top:404px;width:1px;height:21px;background:#f4e8f4"></div>
<div style="position:absolute;left:843px;top:404px;width:1px;height:21px;background:#f4e8f4"></div>
<div style="position:absolute;left:17px;top:424px;width:35px;height:1px;background:#a0a0a0"></div>
<div style="position:absolute;left:54.8px;top:406.80px;line-height:15px;font-family:'Liberation Sans', sans-serif;font-size:13px;font-weight:bold;color:#0a0aa8;white-space:pre;transform:scaleX(0.965);transform-origin:0 0;">PARTY WISE TOTALS</div>
<div style="position:absolute;left:298.5px;width:400px;text-align:right;top:407.00px;line-height:15px;font-family:'Liberation Sans', sans-serif;font-size:13px;font-weight:bold;color:#e00010;white-space:pre;transform:scaleX(0.975);transform-origin:100% 0;">-3</div>
<div style="position:absolute;left:440.5px;width:400px;text-align:right;top:407.00px;line-height:15px;font-family:'Liberation Sans', sans-serif;font-size:13px;font-weight:bold;color:#e00010;white-space:pre;transform:scaleX(0.975);transform-origin:100% 0;">-266.67</div>
<div style="position:absolute;left:610.5px;width:400px;text-align:right;top:407.00px;line-height:15px;font-family:'Liberation Sans', sans-serif;font-size:13px;font-weight:bold;color:#e00010;white-space:pre;transform:scaleX(0.975);transform-origin:100% 0;">-272.00</div>
<div style="position:absolute;left:17px;top:425px;width:34px;height:20px;background:#f0f0f0"></div>
<div style="position:absolute;left:844px;top:425px;width:169px;height:20px;background:#ffffc4"></div>
<div style="position:absolute;left:559px;top:425px;width:1px;height:21px;background:#efefef"></div>
<div style="position:absolute;left:630px;top:425px;width:1px;height:21px;background:#efefef"></div>
<div style="position:absolute;left:701px;top:425px;width:1px;height:21px;background:#efefef"></div>
<div style="position:absolute;left:772px;top:425px;width:1px;height:21px;background:#efefef"></div>
<div style="position:absolute;left:843px;top:425px;width:1px;height:21px;background:#efefef"></div>
<div style="position:absolute;left:17px;top:445px;width:35px;height:1px;background:#a0a0a0"></div>
<div style="position:absolute;left:51px;top:425px;width:1px;height:21px;background:#a0a0a0"></div>
<div style="position:absolute;left:400px;top:425px;width:104px;height:20px;background:#a0fab4"></div>
<div style="position:absolute;left:400px;top:445px;width:104px;height:1px;background:#cff8d6"></div>
<div style="position:absolute;left:631px;top:445px;width:383px;height:1px;background:#efefef"></div>
<div style="position:absolute;left:844px;top:445px;width:169px;height:1px;background:#f6f6dc"></div>
<div style="position:absolute;left:20px;top:428.67px;line-height:14px;font-family:'Liberation Sans', sans-serif;font-size:12.5px;font-weight:normal;color:#000;white-space:pre;transform:scaleX(0.865);transform-origin:0 0;">12</div>
<div style="position:absolute;left:403px;top:429.27px;line-height:14px;font-family:'Liberation Sans', sans-serif;font-size:12.5px;font-weight:normal;color:#000;white-space:pre;transform:scaleX(0.865);transform-origin:0 0;">CAFE CUBA</div>
<div style="position:absolute;left:300px;width:400px;text-align:right;top:428.67px;line-height:14px;font-family:'Liberation Sans', sans-serif;font-size:12.5px;font-weight:normal;color:#b00000;white-space:pre;transform:scaleX(0.865);transform-origin:100% 0;">-2</div>
<div style="position:absolute;left:371px;width:400px;text-align:right;top:428.67px;line-height:14px;font-family:'Liberation Sans', sans-serif;font-size:12.5px;font-weight:normal;color:#000;white-space:pre;transform:scaleX(0.865);transform-origin:100% 0;">13.23</div>
<div style="position:absolute;left:442px;width:400px;text-align:right;top:428.67px;line-height:14px;font-family:'Liberation Sans', sans-serif;font-size:12.5px;font-weight:normal;color:#b00000;white-space:pre;transform:scaleX(0.865);transform-origin:100% 0;">-26.46</div>
<div style="position:absolute;left:612px;width:400px;text-align:right;top:428.67px;line-height:14px;font-family:'Liberation Sans', sans-serif;font-size:12.5px;font-weight:normal;color:#b00000;white-space:pre;transform:scaleX(0.865);transform-origin:100% 0;">-28.00</div>
<div style="position:absolute;left:17px;top:446px;width:996px;height:20px;background:#ffd4ff"></div>
<div style="position:absolute;left:17px;top:466px;width:996px;height:1px;background:#f8f0f8"></div>
<div style="position:absolute;left:51px;top:446px;width:1px;height:21px;background:#a0a0a0"></div>
<div style="position:absolute;left:189px;top:446px;width:1px;height:21px;background:#f4e8f4"></div>
<div style="position:absolute;left:260px;top:446px;width:1px;height:21px;background:#f4e8f4"></div>
<div style="position:absolute;left:399px;top:446px;width:1px;height:21px;background:#f4e8f4"></div>
<div style="position:absolute;left:504px;top:446px;width:1px;height:21px;background:#f4e8f4"></div>
<div style="position:absolute;left:559px;top:446px;width:1px;height:21px;background:#f4e8f4"></div>
<div style="position:absolute;left:630px;top:446px;width:1px;height:21px;background:#f4e8f4"></div>
<div style="position:absolute;left:701px;top:446px;width:1px;height:21px;background:#f4e8f4"></div>
<div style="position:absolute;left:772px;top:446px;width:1px;height:21px;background:#f4e8f4"></div>
<div style="position:absolute;left:843px;top:446px;width:1px;height:21px;background:#f4e8f4"></div>
<div style="position:absolute;left:17px;top:466px;width:35px;height:1px;background:#a0a0a0"></div>
<div style="position:absolute;left:54.8px;top:448.80px;line-height:15px;font-family:'Liberation Sans', sans-serif;font-size:13px;font-weight:bold;color:#0a0aa8;white-space:pre;transform:scaleX(0.965);transform-origin:0 0;">PARTY WISE TOTALS</div>
<div style="position:absolute;left:298.5px;width:400px;text-align:right;top:449.00px;line-height:15px;font-family:'Liberation Sans', sans-serif;font-size:13px;font-weight:bold;color:#e00010;white-space:pre;transform:scaleX(0.975);transform-origin:100% 0;">-2</div>
<div style="position:absolute;left:440.5px;width:400px;text-align:right;top:449.00px;line-height:15px;font-family:'Liberation Sans', sans-serif;font-size:13px;font-weight:bold;color:#e00010;white-space:pre;transform:scaleX(0.975);transform-origin:100% 0;">-26.46</div>
<div style="position:absolute;left:610.5px;width:400px;text-align:right;top:449.00px;line-height:15px;font-family:'Liberation Sans', sans-serif;font-size:13px;font-weight:bold;color:#e00010;white-space:pre;transform:scaleX(0.975);transform-origin:100% 0;">-28.00</div>
<div style="position:absolute;left:18px;top:467px;width:995px;height:20px;background:#0000ff"></div>
<div style="position:absolute;left:17px;top:487px;width:996px;height:1px;background:#c0c0ff"></div>
<div style="position:absolute;left:51px;top:467px;width:1px;height:21px;background:#c8c8ff"></div>
<div style="position:absolute;left:189px;top:467px;width:1px;height:21px;background:#c8c8ff"></div>
<div style="position:absolute;left:260px;top:467px;width:1px;height:21px;background:#c8c8ff"></div>
<div style="position:absolute;left:399px;top:467px;width:1px;height:21px;background:#c8c8ff"></div>
<div style="position:absolute;left:504px;top:467px;width:1px;height:21px;background:#c8c8ff"></div>
<div style="position:absolute;left:559px;top:467px;width:1px;height:21px;background:#c8c8ff"></div>
<div style="position:absolute;left:630px;top:467px;width:1px;height:21px;background:#c8c8ff"></div>
<div style="position:absolute;left:701px;top:467px;width:1px;height:21px;background:#c8c8ff"></div>
<div style="position:absolute;left:772px;top:467px;width:1px;height:21px;background:#c8c8ff"></div>
<div style="position:absolute;left:843px;top:467px;width:1px;height:21px;background:#c8c8ff"></div>
<div style="position:absolute;left:17px;top:487px;width:35px;height:1px;background:#a0a0a0"></div>
<div style="position:absolute;left:51px;top:467px;width:1px;height:21px;background:#a0a0a0"></div>
<svg style="position:absolute;left:190px;top:467px" width="70" height="20" shape-rendering="crispEdges"><rect x="0.5" y="0.5" width="69" height="19" fill="none" stroke="#fff"/><rect x="0" y="0" width="1" height="1" fill="#000"/><rect x="0" y="19" width="1" height="1" fill="#000"/><rect x="2" y="0" width="1" height="1" fill="#000"/><rect x="2" y="19" width="1" height="1" fill="#000"/><rect x="4" y="0" width="1" height="1" fill="#000"/><rect x="4" y="19" width="1" height="1" fill="#000"/><rect x="6" y="0" width="1" height="1" fill="#000"/><rect x="6" y="19" width="1" height="1" fill="#000"/><rect x="8" y="0" width="1" height="1" fill="#000"/><rect x="8" y="19" width="1" height="1" fill="#000"/><rect x="10" y="0" width="1" height="1" fill="#000"/><rect x="10" y="19" width="1" height="1" fill="#000"/><rect x="12" y="0" width="1" height="1" fill="#000"/><rect x="12" y="19" width="1" height="1" fill="#000"/><rect x="14" y="0" width="1" height="1" fill="#000"/><rect x="14" y="19" width="1" height="1" fill="#000"/><rect x="16" y="0" width="1" height="1" fill="#000"/><rect x="16" y="19" width="1" height="1" fill="#000"/><rect x="18" y="0" width="1" height="1" fill="#000"/><rect x="18" y="19" width="1" height="1" fill="#000"/><rect x="20" y="0" width="1" height="1" fill="#000"/><rect x="20" y="19" width="1" height="1" fill="#000"/><rect x="22" y="0" width="1" height="1" fill="#000"/><rect x="22" y="19" width="1" height="1" fill="#000"/><rect x="24" y="0" width="1" height="1" fill="#000"/><rect x="24" y="19" width="1" height="1" fill="#000"/><rect x="26" y="0" width="1" height="1" fill="#000"/><rect x="26" y="19" width="1" height="1" fill="#000"/><rect x="28" y="0" width="1" height="1" fill="#000"/><rect x="28" y="19" width="1" height="1" fill="#000"/><rect x="30" y="0" width="1" height="1" fill="#000"/><rect x="30" y="19" width="1" height="1" fill="#000"/><rect x="32" y="0" width="1" height="1" fill="#000"/><rect x="32" y="19" width="1" height="1" fill="#000"/><rect x="34" y="0" width="1" height="1" fill="#000"/><rect x="34" y="19" width="1" height="1" fill="#000"/><rect x="36" y="0" width="1" height="1" fill="#000"/><rect x="36" y="19" width="1" height="1" fill="#000"/><rect x="38" y="0" width="1" height="1" fill="#000"/><rect x="38" y="19" width="1" height="1" fill="#000"/><rect x="40" y="0" width="1" height="1" fill="#000"/><rect x="40" y="19" width="1" height="1" fill="#000"/><rect x="42" y="0" width="1" height="1" fill="#000"/><rect x="42" y="19" width="1" height="1" fill="#000"/><rect x="44" y="0" width="1" height="1" fill="#000"/><rect x="44" y="19" width="1" height="1" fill="#000"/><rect x="46" y="0" width="1" height="1" fill="#000"/><rect x="46" y="19" width="1" height="1" fill="#000"/><rect x="48" y="0" width="1" height="1" fill="#000"/><rect x="48" y="19" width="1" height="1" fill="#000"/><rect x="50" y="0" width="1" height="1" fill="#000"/><rect x="50" y="19" width="1" height="1" fill="#000"/><rect x="52" y="0" width="1" height="1" fill="#000"/><rect x="52" y="19" width="1" height="1" fill="#000"/><rect x="54" y="0" width="1" height="1" fill="#000"/><rect x="54" y="19" width="1" height="1" fill="#000"/><rect x="56" y="0" width="1" height="1" fill="#000"/><rect x="56" y="19" width="1" height="1" fill="#000"/><rect x="58" y="0" width="1" height="1" fill="#000"/><rect x="58" y="19" width="1" height="1" fill="#000"/><rect x="60" y="0" width="1" height="1" fill="#000"/><rect x="60" y="19" width="1" height="1" fill="#000"/><rect x="62" y="0" width="1" height="1" fill="#000"/><rect x="62" y="19" width="1" height="1" fill="#000"/><rect x="64" y="0" width="1" height="1" fill="#000"/><rect x="64" y="19" width="1" height="1" fill="#000"/><rect x="66" y="0" width="1" height="1" fill="#000"/><rect x="66" y="19" width="1" height="1" fill="#000"/><rect x="68" y="0" width="1" height="1" fill="#000"/><rect x="68" y="19" width="1" height="1" fill="#000"/><rect x="0" y="0" width="1" height="1" fill="#000"/><rect x="69" y="0" width="1" height="1" fill="#000"/><rect x="0" y="2" width="1" height="1" fill="#000"/><rect x="69" y="2" width="1" height="1" fill="#000"/><rect x="0" y="4" width="1" height="1" fill="#000"/><rect x="69" y="4" width="1" height="1" fill="#000"/><rect x="0" y="6" width="1" height="1" fill="#000"/><rect x="69" y="6" width="1" height="1" fill="#000"/><rect x="0" y="8" width="1" height="1" fill="#000"/><rect x="69" y="8" width="1" height="1" fill="#000"/><rect x="0" y="10" width="1" height="1" fill="#000"/><rect x="69" y="10" width="1" height="1" fill="#000"/><rect x="0" y="12" width="1" height="1" fill="#000"/><rect x="69" y="12" width="1" height="1" fill="#000"/><rect x="0" y="14" width="1" height="1" fill="#000"/><rect x="69" y="14" width="1" height="1" fill="#000"/><rect x="0" y="16" width="1" height="1" fill="#000"/><rect x="69" y="16" width="1" height="1" fill="#000"/><rect x="0" y="18" width="1" height="1" fill="#000"/><rect x="69" y="18" width="1" height="1" fill="#000"/></svg>
<div style="position:absolute;left:54.8px;top:469.80px;line-height:15px;font-family:'Liberation Sans', sans-serif;font-size:13px;font-weight:bold;color:#ffff30;white-space:pre;transform:scaleX(0.935);transform-origin:0 0;">GRAND TOTALS</div>
<div style="position:absolute;left:298.5px;width:400px;text-align:right;top:470.00px;line-height:15px;font-family:'Liberation Sans', sans-serif;font-size:13px;font-weight:bold;color:#e8104a;white-space:pre;transform:scaleX(0.975);transform-origin:100% 0;">-25</div>
<div style="position:absolute;left:440.5px;width:400px;text-align:right;top:470.00px;line-height:15px;font-family:'Liberation Sans', sans-serif;font-size:13px;font-weight:bold;color:#e8104a;white-space:pre;transform:scaleX(0.975);transform-origin:100% 0;">-1,135.09</div>
<div style="position:absolute;left:610.5px;width:400px;text-align:right;top:470.00px;line-height:15px;font-family:'Liberation Sans', sans-serif;font-size:13px;font-weight:bold;color:#e8104a;white-space:pre;transform:scaleX(0.975);transform-origin:100% 0;">-1,179.00</div>
<div style="position:absolute;left:261px;top:131px;width:138px;height:62px;background:#ffd6c1"></div>
<div style="position:absolute;left:54.8px;top:156.17px;line-height:14px;font-family:'Liberation Sans', sans-serif;font-size:12.5px;font-weight:normal;color:#000;white-space:pre;transform:scaleX(0.84);transform-origin:0 0;">SR-1</div>
<div style="position:absolute;left:192.8px;top:156.17px;line-height:14px;font-family:'Liberation Sans', sans-serif;font-size:12.5px;font-weight:normal;color:#000;white-space:pre;transform:scaleX(0.95);transform-origin:0 0;">25/01/2015</div>
<div style="position:absolute;left:264px;top:149.37px;line-height:14px;font-family:'Liberation Sans', sans-serif;font-size:12.5px;font-weight:normal;color:#000;white-space:pre;transform:scaleX(0.865);transform-origin:0 0;">AJAYA GROCERY</div>
<div style="position:absolute;left:271px;top:162.37px;line-height:14px;font-family:'Liberation Sans', sans-serif;font-size:12.5px;font-weight:normal;color:#000;white-space:pre;transform:scaleX(0.865);transform-origin:0 0;">-PIPILI</div>
<div style="position:absolute;left:189px;top:131px;width:1px;height:63px;background:#efefef"></div>
<div style="position:absolute;left:52px;top:193px;width:347px;height:1px;background:#efefef"></div>
<div style="position:absolute;left:261px;top:215px;width:138px;height:125px;background:#ffd6c1"></div>
<div style="position:absolute;left:54.8px;top:271.67px;line-height:14px;font-family:'Liberation Sans', sans-serif;font-size:12.5px;font-weight:normal;color:#000;white-space:pre;transform:scaleX(0.84);transform-origin:0 0;">SR-2</div>
<div style="position:absolute;left:192.8px;top:271.67px;line-height:14px;font-family:'Liberation Sans', sans-serif;font-size:12.5px;font-weight:normal;color:#000;white-space:pre;transform:scaleX(0.95);transform-origin:0 0;">21/02/2015</div>
<div style="position:absolute;left:264px;top:264.87px;line-height:14px;font-family:'Liberation Sans', sans-serif;font-size:12.5px;font-weight:normal;color:#000;white-space:pre;transform:scaleX(0.865);transform-origin:0 0;">A.C. NAYAK</div>
<div style="position:absolute;left:264.4px;top:277.87px;line-height:14px;font-family:'Liberation Sans', sans-serif;font-size:12.5px;font-weight:normal;color:#000;white-space:pre;transform:scaleX(0.865);transform-origin:0 0;">-CHANDANPUR</div>
<div style="position:absolute;left:189px;top:215px;width:1px;height:126px;background:#efefef"></div>
<div style="position:absolute;left:52px;top:340px;width:347px;height:1px;background:#efefef"></div>
<div style="position:absolute;left:261px;top:362px;width:138px;height:41px;background:#ffd6c1"></div>
<div style="position:absolute;left:54.8px;top:376.67px;line-height:14px;font-family:'Liberation Sans', sans-serif;font-size:12.5px;font-weight:normal;color:#000;white-space:pre;transform:scaleX(0.84);transform-origin:0 0;">SR-3</div>
<div style="position:absolute;left:192.8px;top:376.67px;line-height:14px;font-family:'Liberation Sans', sans-serif;font-size:12.5px;font-weight:normal;color:#000;white-space:pre;transform:scaleX(0.95);transform-origin:0 0;">23/02/2015</div>
<div style="position:absolute;left:264px;top:369.87px;line-height:14px;font-family:'Liberation Sans', sans-serif;font-size:12.5px;font-weight:normal;color:#000;white-space:pre;transform:scaleX(0.865);transform-origin:0 0;">ABHIJIT OMFED STALL</div>
<div style="position:absolute;left:280.3px;top:382.87px;line-height:14px;font-family:'Liberation Sans', sans-serif;font-size:12.5px;font-weight:normal;color:#000;white-space:pre;transform:scaleX(0.865);transform-origin:0 0;">-PIPILI</div>
<div style="position:absolute;left:189px;top:362px;width:1px;height:42px;background:#efefef"></div>
<div style="position:absolute;left:52px;top:403px;width:347px;height:1px;background:#efefef"></div>
<div style="position:absolute;left:261px;top:425px;width:138px;height:20px;background:#ffd6c1"></div>
<div style="position:absolute;left:54.8px;top:429.17px;line-height:14px;font-family:'Liberation Sans', sans-serif;font-size:12.5px;font-weight:normal;color:#000;white-space:pre;transform:scaleX(0.84);transform-origin:0 0;">SR-4</div>
<div style="position:absolute;left:192.8px;top:429.17px;line-height:14px;font-family:'Liberation Sans', sans-serif;font-size:12.5px;font-weight:normal;color:#000;white-space:pre;transform:scaleX(0.95);transform-origin:0 0;">27/02/2015</div>
<div style="position:absolute;left:264px;top:426.17px;line-height:14px;font-family:'Liberation Sans', sans-serif;font-size:12.5px;font-weight:normal;color:#000;white-space:pre;transform:scaleX(0.865);transform-origin:0 0;">ACHARYA BETTLE SHOP</div>
<div style="position:absolute;left:189px;top:425px;width:1px;height:21px;background:#efefef"></div>
<div style="position:absolute;left:52px;top:445px;width:347px;height:1px;background:#efefef"></div>
<div style="position:absolute;left:505px;top:151px;width:54px;height:1px;background:#efefef"></div>
<div style="position:absolute;left:507.5px;top:134.97px;line-height:14px;font-family:'Liberation Sans', sans-serif;font-size:12.5px;font-weight:normal;color:#000;white-space:pre;transform:scaleX(0.865);transform-origin:0 0;">200 ML</div>
<div style="position:absolute;left:505px;top:172px;width:54px;height:1px;background:#efefef"></div>
<div style="position:absolute;left:507.5px;top:155.97px;line-height:14px;font-family:'Liberation Sans', sans-serif;font-size:12.5px;font-weight:normal;color:#000;white-space:pre;transform:scaleX(0.865);transform-origin:0 0;">250 ML</div>
<div style="position:absolute;left:505px;top:193px;width:54px;height:1px;background:#efefef"></div>
<div style="position:absolute;left:507.5px;top:176.97px;line-height:14px;font-family:'Liberation Sans', sans-serif;font-size:12.5px;font-weight:normal;color:#000;white-space:pre;transform:scaleX(0.865);transform-origin:0 0;">PCS</div>
<div style="position:absolute;left:505px;top:235px;width:54px;height:1px;background:#efefef"></div>
<div style="position:absolute;left:507.5px;top:218.97px;line-height:14px;font-family:'Liberation Sans', sans-serif;font-size:12.5px;font-weight:normal;color:#000;white-space:pre;transform:scaleX(0.865);transform-origin:0 0;">100 ML</div>
<div style="position:absolute;left:505px;top:256px;width:54px;height:1px;background:#efefef"></div>
<div style="position:absolute;left:507.5px;top:237.37px;line-height:14px;font-family:'Liberation Sans', sans-serif;font-size:12.5px;font-weight:normal;color:#000;white-space:pre;transform:scaleX(0.865);transform-origin:0 0;">100+30</div>
<div style="position:absolute;left:505px;top:277px;width:54px;height:1px;background:#efefef"></div>
<div style="position:absolute;left:507.5px;top:260.97px;line-height:14px;font-family:'Liberation Sans', sans-serif;font-size:12.5px;font-weight:normal;color:#000;white-space:pre;transform:scaleX(0.865);transform-origin:0 0;">160 ML</div>
<div style="position:absolute;left:505px;top:319px;width:54px;height:1px;background:#efefef"></div>
<div style="position:absolute;left:507.5px;top:292.47px;line-height:14px;font-family:'Liberation Sans', sans-serif;font-size:12.5px;font-weight:normal;color:#000;white-space:pre;transform:scaleX(0.865);transform-origin:0 0;">250 ML</div>
<div style="position:absolute;left:505px;top:340px;width:54px;height:1px;background:#efefef"></div>
<div style="position:absolute;left:507.5px;top:323.97px;line-height:14px;font-family:'Liberation Sans', sans-serif;font-size:12.5px;font-weight:normal;color:#000;white-space:pre;transform:scaleX(0.865);transform-origin:0 0;">50 ML</div>
<div style="position:absolute;left:505px;top:382px;width:54px;height:1px;background:#efefef"></div>
<div style="position:absolute;left:507.5px;top:363.37px;line-height:14px;font-family:'Liberation Sans', sans-serif;font-size:12.5px;font-weight:normal;color:#000;white-space:pre;transform:scaleX(0.865);transform-origin:0 0;">100+30</div>
<div style="position:absolute;left:505px;top:403px;width:54px;height:1px;background:#efefef"></div>
<div style="position:absolute;left:507.5px;top:386.97px;line-height:14px;font-family:'Liberation Sans', sans-serif;font-size:12.5px;font-weight:normal;color:#000;white-space:pre;transform:scaleX(0.865);transform-origin:0 0;">400 GM</div>
<div style="position:absolute;left:505px;top:445px;width:54px;height:1px;background:#efefef"></div>
<div style="position:absolute;left:507.5px;top:428.97px;line-height:14px;font-family:'Liberation Sans', sans-serif;font-size:12.5px;font-weight:normal;color:#000;white-space:pre;transform:scaleX(0.865);transform-origin:0 0;">150 ML</div>
<div style="position:absolute;left:560px;top:151px;width:70px;height:1px;background:#efefef"></div>
<div style="position:absolute;left:563px;top:134.97px;line-height:14px;font-family:'Liberation Sans', sans-serif;font-size:12.5px;font-weight:normal;color:#000;white-space:pre;transform:scaleX(0.865);transform-origin:0 0;">90</div>
<div style="position:absolute;left:560px;top:172px;width:70px;height:1px;background:#efefef"></div>
<div style="position:absolute;left:563px;top:155.97px;line-height:14px;font-family:'Liberation Sans', sans-serif;font-size:12.5px;font-weight:normal;color:#000;white-space:pre;transform:scaleX(0.865);transform-origin:0 0;">45</div>
<div style="position:absolute;left:560px;top:193px;width:70px;height:1px;background:#efefef"></div>
<div style="position:absolute;left:563px;top:176.97px;line-height:14px;font-family:'Liberation Sans', sans-serif;font-size:12.5px;font-weight:normal;color:#000;white-space:pre;transform:scaleX(0.865);transform-origin:0 0;">80</div>
<div style="position:absolute;left:560px;top:235px;width:70px;height:1px;background:#efefef"></div>
<div style="position:absolute;left:563px;top:218.97px;line-height:14px;font-family:'Liberation Sans', sans-serif;font-size:12.5px;font-weight:normal;color:#000;white-space:pre;transform:scaleX(0.865);transform-origin:0 0;">45</div>
<div style="position:absolute;left:560px;top:277px;width:70px;height:1px;background:#efefef"></div>
<div style="position:absolute;left:563px;top:250.47px;line-height:14px;font-family:'Liberation Sans', sans-serif;font-size:12.5px;font-weight:normal;color:#000;white-space:pre;transform:scaleX(0.865);transform-origin:0 0;">15</div>
<div style="position:absolute;left:560px;top:298px;width:70px;height:1px;background:#efefef"></div>
<div style="position:absolute;left:563px;top:281.97px;line-height:14px;font-family:'Liberation Sans', sans-serif;font-size:12.5px;font-weight:normal;color:#000;white-space:pre;transform:scaleX(0.865);transform-origin:0 0;">10</div>
<div style="position:absolute;left:560px;top:319px;width:70px;height:1px;background:#efefef"></div>
<div style="position:absolute;left:563px;top:302.97px;line-height:14px;font-family:'Liberation Sans', sans-serif;font-size:12.5px;font-weight:normal;color:#000;white-space:pre;transform:scaleX(0.865);transform-origin:0 0;">15</div>
<div style="position:absolute;left:560px;top:340px;width:70px;height:1px;background:#efefef"></div>
<div style="position:absolute;left:563px;top:323.97px;line-height:14px;font-family:'Liberation Sans', sans-serif;font-size:12.5px;font-weight:normal;color:#000;white-space:pre;transform:scaleX(0.865);transform-origin:0 0;">35</div>
<div style="position:absolute;left:560px;top:382px;width:70px;height:1px;background:#efefef"></div>
<div style="position:absolute;left:563px;top:365.97px;line-height:14px;font-family:'Liberation Sans', sans-serif;font-size:12.5px;font-weight:normal;color:#000;white-space:pre;transform:scaleX(0.865);transform-origin:0 0;">15</div>
<div style="position:absolute;left:560px;top:403px;width:70px;height:1px;background:#efefef"></div>
<div style="position:absolute;left:563px;top:386.97px;line-height:14px;font-family:'Liberation Sans', sans-serif;font-size:12.5px;font-weight:normal;color:#000;white-space:pre;transform:scaleX(0.865);transform-origin:0 0;">20</div>
<div style="position:absolute;left:560px;top:445px;width:70px;height:1px;background:#efefef"></div>
<div style="position:absolute;left:563px;top:428.97px;line-height:14px;font-family:'Liberation Sans', sans-serif;font-size:12.5px;font-weight:normal;color:#000;white-space:pre;transform:scaleX(0.865);transform-origin:0 0;">15</div>
<div style="position:absolute;left:15px;top:498px;width:80px;height:20px;background:#f0f0f0;border:1px solid;border-color:#b0b0b0 #696969 #696969 #b0b0b0;box-sizing:border-box"></div>
<div style="position:absolute;left:16px;top:499px;width:78px;height:18px;border:1px solid;border-color:#ffffff #a0a0a0 #a0a0a0 #ffffff;box-sizing:border-box"></div>
<div style="position:absolute;left:21.7px;top:502.84px;line-height:13px;font-family:'Liberation Sans', sans-serif;font-size:12px;font-weight:normal;color:#1e1e1e;white-space:pre;transform:scaleX(1.0667);transform-origin:0 0;">Print Report</div>
<div style="position:absolute;left:96px;top:498px;width:155px;height:20px;background:#f0f0f0;border:1px solid;border-color:#b0b0b0 #696969 #696969 #b0b0b0;box-sizing:border-box"></div>
<div style="position:absolute;left:97px;top:499px;width:153px;height:18px;border:1px solid;border-color:#ffffff #a0a0a0 #a0a0a0 #ffffff;box-sizing:border-box"></div>
<div style="position:absolute;left:103.3px;top:502.84px;line-height:13px;font-family:'Liberation Sans', sans-serif;font-size:12px;font-weight:normal;color:#8c8c8c;white-space:pre;transform:scaleX(1.0677);transform-origin:0 0;">Print With Header/Footer</div>
<div style="position:absolute;left:252px;top:498px;width:49px;height:20px;background:#f0f0f0;border:1px solid;border-color:#b0b0b0 #696969 #696969 #b0b0b0;box-sizing:border-box"></div>
<div style="position:absolute;left:253px;top:499px;width:47px;height:18px;border:1px solid;border-color:#ffffff #a0a0a0 #a0a0a0 #ffffff;box-sizing:border-box"></div>
<div style="position:absolute;left:261px;top:502.84px;line-height:13px;font-family:'Liberation Sans', sans-serif;font-size:12px;font-weight:normal;color:#1e1e1e;white-space:pre;transform:scaleX(1.0297);transform-origin:0 0;">Close</div>
<div style="position:absolute;left:15.3px;top:523.94px;line-height:13px;font-family:'Liberation Sans', sans-serif;font-size:12px;font-weight:normal;color:#000;white-space:pre;transform:scaleX(0.8824);transform-origin:0 0;">F11=Print Report  F12=Print with Head/Foot  CTRL+C=Close</div>
<div style="position:absolute;left:10px;top:541px;width:1012px;height:1px;background:#a0a0a0"></div>
<div style="position:absolute;left:11px;top:542px;width:1010px;height:1px;background:#ffffff"></div>
<div style="position:absolute;left:15.3px;top:544.04px;line-height:13px;font-family:'Liberation Sans', sans-serif;font-size:12px;font-weight:bold;color:#000;white-space:pre;transform:scaleX(0.9885);transform-origin:0 0;">Report Created.</div>
<svg style="position:absolute;left:19px;top:63px" width="16" height="16" viewBox="0 0 16 16" shape-rendering="crispEdges"><rect x="1" y="0" width="14" height="1" fill="#8c8c8c"/><rect x="15" y="0" width="1" height="1" fill="#000"/><rect x="1" y="1" width="1" height="1" fill="#8c8c8c"/><rect x="2" y="1" width="13" height="1" fill="#fff"/><rect x="15" y="1" width="1" height="1" fill="#000"/><rect x="1" y="2" width="1" height="1" fill="#8c8c8c"/><rect x="2" y="2" width="1" height="1" fill="#fff"/><rect x="3" y="2" width="11" height="1" fill="#000080"/><rect x="14" y="2" width="1" height="1" fill="#fff"/><rect x="15" y="2" width="1" height="1" fill="#000"/><rect x="1" y="3" width="1" height="1" fill="#8c8c8c"/><rect x="2" y="3" width="1" height="1" fill="#fff"/><rect x="3" y="3" width="5" height="1" fill="#000080"/><rect x="8" y="3" width="1" height="1" fill="#fff"/><rect x="9" y="3" width="1" height="1" fill="#000080"/><rect x="10" y="3" width="1" height="1" fill="#fff"/><rect x="11" y="3" width="1" height="1" fill="#000080"/><rect x="12" y="3" width="1" height="1" fill="#fff"/><rect x="13" y="3" width="1" height="1" fill="#000080"/><rect x="14" y="3" width="1" height="1" fill="#fff"/><rect x="15" y="3" width="1" height="1" fill="#000"/><rect x="1" y="4" width="1" height="1" fill="#8c8c8c"/><rect x="2" y="4" width="13" height="1" fill="#fff"/><rect x="15" y="4" width="1" height="1" fill="#000"/><rect x="1" y="5" width="1" height="1" fill="#8c8c8c"/><rect x="2" y="5" width="13" height="1" fill="#fff"/><rect x="15" y="5" width="1" height="1" fill="#000"/><rect x="1" y="6" width="1" height="1" fill="#8c8c8c"/><rect x="2" y="6" width="10" height="1" fill="#000"/><rect x="12" y="6" width="3" height="1" fill="#fff"/><rect x="15" y="6" width="1" height="1" fill="#000"/><rect x="2" y="7" width="1" height="1" fill="#000"/><rect x="3" y="7" width="8" height="1" fill="#f4f498"/><rect x="11" y="7" width="1" height="1" fill="#000"/><rect x="12" y="7" width="3" height="1" fill="#fff"/><rect x="15" y="7" width="1" height="1" fill="#000"/><rect x="1" y="8" width="1" height="1" fill="#000"/><rect x="2" y="8" width="8" height="1" fill="#f4f498"/><rect x="10" y="8" width="1" height="1" fill="#000"/><rect x="11" y="8" width="1" height="1" fill="#9a9a30"/><rect x="12" y="8" width="1" height="1" fill="#000"/><rect x="13" y="8" width="2" height="1" fill="#fff"/><rect x="15" y="8" width="1" height="1" fill="#000"/><rect x="0" y="9" width="1" height="1" fill="#000"/><rect x="1" y="9" width="8" height="1" fill="#f4f498"/><rect x="9" y="9" width="1" height="1" fill="#000"/><rect x="10" y="9" width="2" height="1" fill="#9a9a30"/><rect x="12" y="9" width="1" height="1" fill="#000"/><rect x="13" y="9" width="2" height="1" fill="#fff"/><rect x="15" y="9" width="1" height="1" fill="#000"/><rect x="0" y="10" width="10" height="1" fill="#000"/><rect x="10" y="10" width="3" height="1" fill="#9a9a30"/><rect x="13" y="10" width="3" height="1" fill="#000"/><rect x="0" y="11" width="1" height="1" fill="#000"/><rect x="1" y="11" width="1" height="1" fill="#e6e670"/><rect x="2" y="11" width="1" height="1" fill="#c8c850"/><rect x="3" y="11" width="1" height="1" fill="#e6e670"/><rect x="4" y="11" width="1" height="1" fill="#c8c850"/><rect x="5" y="11" width="1" height="1" fill="#e6e670"/><rect x="6" y="11" width="1" height="1" fill="#c8c850"/><rect x="7" y="11" width="1" height="1" fill="#e6e670"/><rect x="8" y="11" width="1" height="1" fill="#c8c850"/><rect x="9" y="11" width="1" height="1" fill="#000"/><rect x="10" y="11" width="2" height="1" fill="#9a9a30"/><rect x="12" y="11" width="1" height="1" fill="#000"/><rect x="0" y="12" width="1" height="1" fill="#000"/><rect x="1" y="12" width="1" height="1" fill="#c8c850"/><rect x="2" y="12" width="1" height="1" fill="#e6e670"/><rect x="3" y="12" width="1" height="1" fill="#c8c850"/><rect x="4" y="12" width="1" height="1" fill="#e6e670"/><rect x="5" y="12" width="1" height="1" fill="#c8c850"/><rect x="6" y="12" width="1" height="1" fill="#e6e670"/><rect x="7" y="12" width="1" height="1" fill="#c8c850"/><rect x="8" y="12" width="1" height="1" fill="#e6e670"/><rect x="9" y="12" width="1" height="1" fill="#000"/><rect x="10" y="12" width="2" height="1" fill="#9a9a30"/><rect x="12" y="12" width="1" height="1" fill="#000"/><rect x="0" y="13" width="1" height="1" fill="#000"/><rect x="1" y="13" width="1" height="1" fill="#e6e670"/><rect x="2" y="13" width="1" height="1" fill="#c8c850"/><rect x="3" y="13" width="1" height="1" fill="#e6e670"/><rect x="4" y="13" width="1" height="1" fill="#c8c850"/><rect x="5" y="13" width="1" height="1" fill="#e6e670"/><rect x="6" y="13" width="1" height="1" fill="#c8c850"/><rect x="7" y="13" width="1" height="1" fill="#e6e670"/><rect x="8" y="13" width="1" height="1" fill="#c8c850"/><rect x="9" y="13" width="1" height="1" fill="#000"/><rect x="10" y="13" width="1" height="1" fill="#9a9a30"/><rect x="11" y="13" width="1" height="1" fill="#000"/><rect x="0" y="14" width="1" height="1" fill="#000"/><rect x="1" y="14" width="1" height="1" fill="#c8c850"/><rect x="2" y="14" width="1" height="1" fill="#e6e670"/><rect x="3" y="14" width="1" height="1" fill="#c8c850"/><rect x="4" y="14" width="1" height="1" fill="#e6e670"/><rect x="5" y="14" width="1" height="1" fill="#c8c850"/><rect x="6" y="14" width="1" height="1" fill="#e6e670"/><rect x="7" y="14" width="1" height="1" fill="#c8c850"/><rect x="8" y="14" width="1" height="1" fill="#e6e670"/><rect x="9" y="14" width="2" height="1" fill="#000"/><rect x="0" y="15" width="10" height="1" fill="#000"/></svg>
<div style="position:absolute;left:41px;top:62px;width:1px;height:17px;background:#a0a0a0"></div>
<div style="position:absolute;left:42px;top:62px;width:1px;height:17px;background:#ffffff"></div>
<svg style="position:absolute;left:50px;top:63px" width="16" height="15" viewBox="0 0 16 15" shape-rendering="crispEdges"><rect x="3" y="0" width="2" height="1" fill="#000"/><rect x="11" y="0" width="1" height="1" fill="#000080"/><rect x="3" y="1" width="2" height="1" fill="#000"/><rect x="11" y="1" width="1" height="1" fill="#000080"/><rect x="2" y="2" width="1" height="1" fill="#000"/><rect x="4" y="2" width="2" height="1" fill="#000"/><rect x="11" y="2" width="1" height="1" fill="#000080"/><rect x="2" y="3" width="1" height="1" fill="#000"/><rect x="4" y="3" width="2" height="1" fill="#000"/><rect x="11" y="3" width="1" height="1" fill="#000080"/><rect x="1" y="4" width="6" height="1" fill="#000"/><rect x="11" y="4" width="1" height="1" fill="#000080"/><rect x="1" y="5" width="1" height="1" fill="#000"/><rect x="5" y="5" width="2" height="1" fill="#000"/><rect x="11" y="5" width="1" height="1" fill="#000080"/><rect x="0" y="6" width="3" height="1" fill="#000"/><rect x="4" y="6" width="4" height="1" fill="#000"/><rect x="11" y="6" width="1" height="1" fill="#000080"/><rect x="11" y="7" width="1" height="1" fill="#000080"/><rect x="0" y="8" width="7" height="1" fill="#000"/><rect x="11" y="8" width="1" height="1" fill="#000080"/><rect x="0" y="9" width="1" height="1" fill="#000"/><rect x="4" y="9" width="2" height="1" fill="#000"/><rect x="11" y="9" width="1" height="1" fill="#000080"/><rect x="3" y="10" width="2" height="1" fill="#000"/><rect x="9" y="10" width="5" height="1" fill="#000080"/><rect x="2" y="11" width="2" height="1" fill="#000"/><rect x="9" y="11" width="5" height="1" fill="#000080"/><rect x="1" y="12" width="2" height="1" fill="#000"/><rect x="7" y="12" width="1" height="1" fill="#000"/><rect x="10" y="12" width="3" height="1" fill="#000080"/><rect x="0" y="13" width="2" height="1" fill="#000"/><rect x="6" y="13" width="2" height="1" fill="#000"/><rect x="10" y="13" width="3" height="1" fill="#000080"/><rect x="0" y="14" width="8" height="1" fill="#000"/><rect x="11" y="14" width="1" height="1" fill="#000080"/></svg>
<svg style="position:absolute;left:72px;top:69px" width="7" height="4" viewBox="0 0 7 4" shape-rendering="crispEdges"><rect x="0" y="0" width="7" height="1" fill="#000000"/><rect x="1" y="1" width="5" height="1" fill="#000000"/><rect x="2" y="2" width="3" height="1" fill="#000000"/><rect x="3" y="3" width="1" height="1" fill="#000000"/></svg>
<svg style="position:absolute;left:88px;top:68px" width="15" height="7" viewBox="0 0 15 7" shape-rendering="crispEdges"><rect x="3" y="0" width="1" height="1" fill="#000000"/><rect x="6" y="0" width="1" height="1" fill="#000000"/><rect x="8" y="0" width="1" height="1" fill="#000000"/><rect x="11" y="0" width="1" height="1" fill="#000000"/><rect x="2" y="1" width="2" height="1" fill="#000000"/><rect x="6" y="1" width="1" height="1" fill="#000000"/><rect x="8" y="1" width="1" height="1" fill="#000000"/><rect x="11" y="1" width="2" height="1" fill="#000000"/><rect x="1" y="2" width="3" height="1" fill="#000000"/><rect x="6" y="2" width="1" height="1" fill="#000000"/><rect x="8" y="2" width="1" height="1" fill="#000000"/><rect x="11" y="2" width="3" height="1" fill="#000000"/><rect x="0" y="3" width="15" height="1" fill="#000000"/><rect x="1" y="4" width="3" height="1" fill="#000000"/><rect x="6" y="4" width="1" height="1" fill="#000000"/><rect x="8" y="4" width="1" height="1" fill="#000000"/><rect x="11" y="4" width="3" height="1" fill="#000000"/><rect x="2" y="5" width="2" height="1" fill="#000000"/><rect x="6" y="5" width="1" height="1" fill="#000000"/><rect x="8" y="5" width="1" height="1" fill="#000000"/><rect x="11" y="5" width="2" height="1" fill="#000000"/><rect x="3" y="6" width="1" height="1" fill="#000000"/><rect x="6" y="6" width="1" height="1" fill="#000000"/><rect x="8" y="6" width="1" height="1" fill="#000000"/><rect x="11" y="6" width="1" height="1" fill="#000000"/></svg>
<svg style="position:absolute;left:110px;top:69px" width="7" height="4" viewBox="0 0 7 4" shape-rendering="crispEdges"><rect x="0" y="0" width="7" height="1" fill="#000000"/><rect x="1" y="1" width="5" height="1" fill="#000000"/><rect x="2" y="2" width="3" height="1" fill="#000000"/><rect x="3" y="3" width="1" height="1" fill="#000000"/></svg>
<div style="position:absolute;left:125px;top:62px;width:1px;height:17px;background:#a0a0a0"></div>
<div style="position:absolute;left:126px;top:62px;width:1px;height:17px;background:#ffffff"></div>
<svg style="position:absolute;left:133px;top:64px" width="16" height="14" viewBox="0 0 16 14" shape-rendering="crispEdges"><rect x="0" y="0" width="6" height="1" fill="#000000"/><rect x="0" y="1" width="1" height="1" fill="#000000"/><rect x="5" y="1" width="2" height="1" fill="#000000"/><rect x="0" y="2" width="1" height="1" fill="#000000"/><rect x="2" y="2" width="3" height="1" fill="#000000"/><rect x="6" y="2" width="2" height="1" fill="#000000"/><rect x="0" y="3" width="1" height="1" fill="#000000"/><rect x="7" y="3" width="6" height="1" fill="#000000"/><rect x="0" y="4" width="1" height="1" fill="#000000"/><rect x="2" y="4" width="6" height="1" fill="#000000"/><rect x="12" y="4" width="2" height="1" fill="#000000"/><rect x="0" y="5" width="1" height="1" fill="#000000"/><rect x="7" y="5" width="1" height="1" fill="#000000"/><rect x="9" y="5" width="2" height="1" fill="#000000"/><rect x="13" y="5" width="2" height="1" fill="#000000"/><rect x="0" y="6" width="1" height="1" fill="#000000"/><rect x="2" y="6" width="6" height="1" fill="#000000"/><rect x="14" y="6" width="1" height="1" fill="#000000"/><rect x="0" y="7" width="1" height="1" fill="#000000"/><rect x="7" y="7" width="1" height="1" fill="#000000"/><rect x="9" y="7" width="6" height="1" fill="#000000"/><rect x="0" y="8" width="1" height="1" fill="#000000"/><rect x="2" y="8" width="6" height="1" fill="#000000"/><rect x="14" y="8" width="1" height="1" fill="#000000"/><rect x="0" y="9" width="8" height="1" fill="#000000"/><rect x="9" y="9" width="4" height="1" fill="#000000"/><rect x="14" y="9" width="1" height="1" fill="#000000"/><rect x="7" y="10" width="1" height="1" fill="#000000"/><rect x="14" y="10" width="1" height="1" fill="#000000"/><rect x="7" y="11" width="1" height="1" fill="#000000"/><rect x="9" y="11" width="4" height="1" fill="#000000"/><rect x="14" y="11" width="1" height="1" fill="#000000"/><rect x="7" y="12" width="1" height="1" fill="#000000"/><rect x="14" y="12" width="1" height="1" fill="#000000"/><rect x="7" y="13" width="8" height="1" fill="#000000"/></svg>
<svg style="position:absolute;left:156px;top:63px" width="17" height="16" viewBox="0 0 17 16" shape-rendering="crispEdges"><rect x="0" y="0" width="1" height="1" fill="#1f6f1f"/><rect x="1" y="0" width="1" height="1" fill="#6aa86a"/><rect x="2" y="0" width="1" height="1" fill="#1f6f1f"/><rect x="3" y="0" width="1" height="1" fill="#6aa86a"/><rect x="4" y="0" width="1" height="1" fill="#1f6f1f"/><rect x="5" y="0" width="1" height="1" fill="#6aa86a"/><rect x="6" y="0" width="1" height="1" fill="#1f6f1f"/><rect x="7" y="0" width="1" height="1" fill="#6aa86a"/><rect x="8" y="0" width="1" height="1" fill="#1f6f1f"/><rect x="9" y="0" width="1" height="1" fill="#6aa86a"/><rect x="10" y="0" width="1" height="1" fill="#1f6f1f"/><rect x="11" y="0" width="1" height="1" fill="#6aa86a"/><rect x="12" y="0" width="1" height="1" fill="#1f6f1f"/><rect x="13" y="0" width="1" height="1" fill="#6aa86a"/><rect x="14" y="0" width="1" height="1" fill="#1f6f1f"/><rect x="15" y="0" width="1" height="1" fill="#6aa86a"/><rect x="16" y="0" width="1" height="1" fill="#1f6f1f"/><rect x="0" y="1" width="1" height="1" fill="#6aa86a"/><rect x="1" y="1" width="1" height="1" fill="#1f6f1f"/><rect x="2" y="1" width="1" height="1" fill="#6aa86a"/><rect x="3" y="1" width="1" height="1" fill="#1f6f1f"/><rect x="4" y="1" width="1" height="1" fill="#6aa86a"/><rect x="5" y="1" width="1" height="1" fill="#1f6f1f"/><rect x="6" y="1" width="1" height="1" fill="#6aa86a"/><rect x="7" y="1" width="1" height="1" fill="#1f6f1f"/><rect x="8" y="1" width="1" height="1" fill="#6aa86a"/><rect x="9" y="1" width="1" height="1" fill="#1f6f1f"/><rect x="10" y="1" width="1" height="1" fill="#6aa86a"/><rect x="11" y="1" width="1" height="1" fill="#1f6f1f"/><rect x="12" y="1" width="1" height="1" fill="#6aa86a"/><rect x="13" y="1" width="1" height="1" fill="#1f6f1f"/><rect x="14" y="1" width="1" height="1" fill="#6aa86a"/><rect x="15" y="1" width="1" height="1" fill="#1f6f1f"/><rect x="16" y="1" width="1" height="1" fill="#6aa86a"/><rect x="0" y="2" width="1" height="1" fill="#1f6f1f"/><rect x="1" y="2" width="1" height="1" fill="#6aa86a"/><rect x="2" y="2" width="13" height="1" fill="#ffffff"/><rect x="15" y="2" width="1" height="1" fill="#6aa86a"/><rect x="16" y="2" width="1" height="1" fill="#1f6f1f"/><rect x="0" y="3" width="1" height="1" fill="#6aa86a"/><rect x="1" y="3" width="1" height="1" fill="#1f6f1f"/><rect x="2" y="3" width="13" height="1" fill="#ffffff"/><rect x="15" y="3" width="1" height="1" fill="#1f6f1f"/><rect x="16" y="3" width="1" height="1" fill="#6aa86a"/><rect x="0" y="4" width="1" height="1" fill="#1f6f1f"/><rect x="1" y="4" width="1" height="1" fill="#6aa86a"/><rect x="2" y="4" width="13" height="1" fill="#ffffff"/><rect x="15" y="4" width="1" height="1" fill="#6aa86a"/><rect x="16" y="4" width="1" height="1" fill="#1f6f1f"/><rect x="0" y="5" width="1" height="1" fill="#6aa86a"/><rect x="1" y="5" width="1" height="1" fill="#1f6f1f"/><rect x="2" y="5" width="13" height="1" fill="#ffffff"/><rect x="15" y="5" width="1" height="1" fill="#1f6f1f"/><rect x="16" y="5" width="1" height="1" fill="#6aa86a"/><rect x="0" y="6" width="1" height="1" fill="#1f6f1f"/><rect x="1" y="6" width="1" height="1" fill="#6aa86a"/><rect x="2" y="6" width="13" height="1" fill="#ffffff"/><rect x="15" y="6" width="1" height="1" fill="#6aa86a"/><rect x="16" y="6" width="1" height="1" fill="#1f6f1f"/><rect x="0" y="7" width="1" height="1" fill="#6aa86a"/><rect x="1" y="7" width="1" height="1" fill="#1f6f1f"/><rect x="2" y="7" width="13" height="1" fill="#ffffff"/><rect x="15" y="7" width="1" height="1" fill="#1f6f1f"/><rect x="16" y="7" width="1" height="1" fill="#6aa86a"/><rect x="0" y="8" width="1" height="1" fill="#1f6f1f"/><rect x="1" y="8" width="1" height="1" fill="#6aa86a"/><rect x="2" y="8" width="13" height="1" fill="#ffffff"/><rect x="15" y="8" width="1" height="1" fill="#6aa86a"/><rect x="16" y="8" width="1" height="1" fill="#1f6f1f"/><rect x="0" y="9" width="1" height="1" fill="#6aa86a"/><rect x="1" y="9" width="1" height="1" fill="#1f6f1f"/><rect x="2" y="9" width="13" height="1" fill="#ffffff"/><rect x="15" y="9" width="1" height="1" fill="#1f6f1f"/><rect x="16" y="9" width="1" height="1" fill="#6aa86a"/><rect x="0" y="10" width="1" height="1" fill="#1f6f1f"/><rect x="1" y="10" width="1" height="1" fill="#6aa86a"/><rect x="2" y="10" width="13" height="1" fill="#ffffff"/><rect x="15" y="10" width="1" height="1" fill="#6aa86a"/><rect x="16" y="10" width="1" height="1" fill="#1f6f1f"/><rect x="0" y="11" width="1" height="1" fill="#6aa86a"/><rect x="1" y="11" width="1" height="1" fill="#1f6f1f"/><rect x="2" y="11" width="13" height="1" fill="#ffffff"/><rect x="15" y="11" width="1" height="1" fill="#1f6f1f"/><rect x="16" y="11" width="1" height="1" fill="#6aa86a"/><rect x="0" y="12" width="1" height="1" fill="#1f6f1f"/><rect x="1" y="12" width="1" height="1" fill="#6aa86a"/><rect x="2" y="12" width="13" height="1" fill="#ffffff"/><rect x="15" y="12" width="1" height="1" fill="#6aa86a"/><rect x="16" y="12" width="1" height="1" fill="#1f6f1f"/><rect x="0" y="13" width="1" height="1" fill="#6aa86a"/><rect x="1" y="13" width="1" height="1" fill="#1f6f1f"/><rect x="2" y="13" width="13" height="1" fill="#ffffff"/><rect x="15" y="13" width="1" height="1" fill="#1f6f1f"/><rect x="16" y="13" width="1" height="1" fill="#6aa86a"/><rect x="0" y="14" width="1" height="1" fill="#1f6f1f"/><rect x="1" y="14" width="1" height="1" fill="#6aa86a"/><rect x="2" y="14" width="1" height="1" fill="#1f6f1f"/><rect x="3" y="14" width="1" height="1" fill="#6aa86a"/><rect x="4" y="14" width="1" height="1" fill="#1f6f1f"/><rect x="5" y="14" width="1" height="1" fill="#6aa86a"/><rect x="6" y="14" width="1" height="1" fill="#1f6f1f"/><rect x="7" y="14" width="1" height="1" fill="#6aa86a"/><rect x="8" y="14" width="1" height="1" fill="#1f6f1f"/><rect x="9" y="14" width="1" height="1" fill="#6aa86a"/><rect x="10" y="14" width="1" height="1" fill="#1f6f1f"/><rect x="11" y="14" width="1" height="1" fill="#6aa86a"/><rect x="12" y="14" width="1" height="1" fill="#1f6f1f"/><rect x="13" y="14" width="1" height="1" fill="#6aa86a"/><rect x="14" y="14" width="1" height="1" fill="#1f6f1f"/><rect x="15" y="14" width="1" height="1" fill="#6aa86a"/><rect x="16" y="14" width="1" height="1" fill="#1f6f1f"/><rect x="0" y="15" width="1" height="1" fill="#6aa86a"/><rect x="1" y="15" width="1" height="1" fill="#1f6f1f"/><rect x="2" y="15" width="1" height="1" fill="#6aa86a"/><rect x="3" y="15" width="1" height="1" fill="#1f6f1f"/><rect x="4" y="15" width="1" height="1" fill="#6aa86a"/><rect x="5" y="15" width="1" height="1" fill="#1f6f1f"/><rect x="6" y="15" width="1" height="1" fill="#6aa86a"/><rect x="7" y="15" width="1" height="1" fill="#1f6f1f"/><rect x="8" y="15" width="1" height="1" fill="#6aa86a"/><rect x="9" y="15" width="1" height="1" fill="#1f6f1f"/><rect x="10" y="15" width="1" height="1" fill="#6aa86a"/><rect x="11" y="15" width="1" height="1" fill="#1f6f1f"/><rect x="12" y="15" width="1" height="1" fill="#6aa86a"/><rect x="13" y="15" width="1" height="1" fill="#1f6f1f"/><rect x="14" y="15" width="1" height="1" fill="#6aa86a"/><rect x="15" y="15" width="1" height="1" fill="#1f6f1f"/><rect x="16" y="15" width="1" height="1" fill="#6aa86a"/></svg>
<svg style="position:absolute;left:156px;top:63px" width="17" height="16" viewBox="0 0 17 16"><path d="M4 4 L13 12 M13 4 L4 12" stroke="#217a21" stroke-width="3"/><path d="M4.5 4.5 L12.5 11.5" stroke="#e8f8e8" stroke-width="0.7"/></svg>
<svg style="position:absolute;left:179px;top:69px" width="7" height="4" viewBox="0 0 7 4" shape-rendering="crispEdges"><rect x="0" y="0" width="7" height="1" fill="#000000"/><rect x="1" y="1" width="5" height="1" fill="#000000"/><rect x="2" y="2" width="3" height="1" fill="#000000"/><rect x="3" y="3" width="1" height="1" fill="#000000"/></svg>
<svg style="position:absolute;left:193px;top:63px" width="18" height="16" viewBox="0 0 18 16"><defs><linearGradient id="ieg" x1="0" y1="0" x2="0" y2="1"><stop offset="0" stop-color="#6cc0f4"/><stop offset="1" stop-color="#1560bc"/></linearGradient></defs><ellipse cx="9" cy="8.3" rx="8.6" ry="3.2" transform="rotate(-40 9 8.3)" fill="none" stroke="#48a4ea" stroke-width="1.3"/><circle cx="9.3" cy="8.6" r="6.3" fill="url(#ieg)"/><rect x="6" y="5.9" width="6.5" height="1.9" fill="#fff"/><rect x="6" y="9.9" width="6.5" height="1.9" fill="#fff"/></svg>
<svg style="position:absolute;left:219px;top:64px" width="12" height="13" viewBox="0 0 12 13" shape-rendering="crispEdges"><rect x="5" y="0" width="2" height="1" fill="#800000"/><rect x="4" y="1" width="4" height="1" fill="#800000"/><rect x="3" y="2" width="6" height="1" fill="#800000"/><rect x="2" y="3" width="8" height="1" fill="#800000"/><rect x="1" y="4" width="10" height="1" fill="#800000"/><rect x="0" y="5" width="12" height="1" fill="#800000"/><rect x="3" y="6" width="6" height="1" fill="#800000"/><rect x="3" y="7" width="6" height="1" fill="#800000"/><rect x="3" y="8" width="6" height="1" fill="#800000"/><rect x="3" y="9" width="6" height="1" fill="#800000"/><rect x="3" y="10" width="6" height="1" fill="#800000"/><rect x="3" y="11" width="6" height="1" fill="#800000"/><rect x="3" y="12" width="6" height="1" fill="#800000"/></svg>
<svg style="position:absolute;left:240px;top:64px" width="16" height="13" viewBox="0 0 16 13" shape-rendering="crispEdges"><rect x="3" y="0" width="3" height="1" fill="#000000"/><rect x="10" y="0" width="3" height="1" fill="#000000"/><rect x="3" y="1" width="1" height="1" fill="#000000"/><rect x="5" y="1" width="1" height="1" fill="#000000"/><rect x="10" y="1" width="1" height="1" fill="#000000"/><rect x="12" y="1" width="1" height="1" fill="#000000"/><rect x="2" y="2" width="5" height="1" fill="#000000"/><rect x="9" y="2" width="5" height="1" fill="#000000"/><rect x="2" y="3" width="2" height="1" fill="#000000"/><rect x="5" y="3" width="2" height="1" fill="#000000"/><rect x="9" y="3" width="2" height="1" fill="#000000"/><rect x="12" y="3" width="2" height="1" fill="#000000"/><rect x="1" y="4" width="14" height="1" fill="#000000"/><rect x="1" y="5" width="2" height="1" fill="#000000"/><rect x="4" y="5" width="2" height="1" fill="#000000"/><rect x="7" y="5" width="2" height="1" fill="#000000"/><rect x="10" y="5" width="2" height="1" fill="#000000"/><rect x="13" y="5" width="2" height="1" fill="#000000"/><rect x="0" y="6" width="3" height="1" fill="#000000"/><rect x="4" y="6" width="2" height="1" fill="#000000"/><rect x="7" y="6" width="2" height="1" fill="#000000"/><rect x="10" y="6" width="2" height="1" fill="#000000"/><rect x="13" y="6" width="3" height="1" fill="#000000"/><rect x="0" y="7" width="16" height="1" fill="#000000"/><rect x="0" y="8" width="7" height="1" fill="#000000"/><rect x="9" y="8" width="7" height="1" fill="#000000"/><rect x="0" y="9" width="1" height="1" fill="#000000"/><rect x="2" y="9" width="5" height="1" fill="#000000"/><rect x="9" y="9" width="5" height="1" fill="#000000"/><rect x="15" y="9" width="1" height="1" fill="#000000"/><rect x="0" y="10" width="1" height="1" fill="#000000"/><rect x="2" y="10" width="5" height="1" fill="#000000"/><rect x="9" y="10" width="5" height="1" fill="#000000"/><rect x="15" y="10" width="1" height="1" fill="#000000"/><rect x="0" y="11" width="7" height="1" fill="#000000"/><rect x="9" y="11" width="7" height="1" fill="#000000"/><rect x="0" y="12" width="6" height="1" fill="#000000"/><rect x="10" y="12" width="6" height="1" fill="#000000"/></svg>
<svg style="position:absolute;left:263px;top:63px" width="16" height="16" viewBox="0 0 16 16" shape-rendering="crispEdges"><rect x="15" y="0" width="1" height="1" fill="#000"/><rect x="15" y="1" width="1" height="1" fill="#000"/><rect x="0" y="2" width="1" height="1" fill="#000"/><rect x="7" y="2" width="2" height="1" fill="#0000b0"/><rect x="15" y="2" width="1" height="1" fill="#000"/><rect x="7" y="3" width="2" height="1" fill="#0000b0"/><rect x="15" y="3" width="1" height="1" fill="#000"/><rect x="0" y="4" width="1" height="1" fill="#000"/><rect x="7" y="4" width="2" height="1" fill="#0000b0"/><rect x="13" y="4" width="2" height="1" fill="#008000"/><rect x="15" y="4" width="1" height="1" fill="#000"/><rect x="3" y="5" width="2" height="1" fill="#e00000"/><rect x="7" y="5" width="2" height="1" fill="#0000b0"/><rect x="13" y="5" width="2" height="1" fill="#008000"/><rect x="15" y="5" width="1" height="1" fill="#000"/><rect x="0" y="6" width="1" height="1" fill="#000"/><rect x="3" y="6" width="2" height="1" fill="#e00000"/><rect x="7" y="6" width="2" height="1" fill="#0000b0"/><rect x="13" y="6" width="2" height="1" fill="#008000"/><rect x="15" y="6" width="1" height="1" fill="#000"/><rect x="3" y="7" width="2" height="1" fill="#e00000"/><rect x="7" y="7" width="2" height="1" fill="#0000b0"/><rect x="9" y="7" width="2" height="1" fill="#e000e0"/><rect x="13" y="7" width="2" height="1" fill="#008000"/><rect x="15" y="7" width="1" height="1" fill="#000"/><rect x="0" y="8" width="1" height="1" fill="#000"/><rect x="3" y="8" width="2" height="1" fill="#e00000"/><rect x="7" y="8" width="2" height="1" fill="#0000b0"/><rect x="9" y="8" width="2" height="1" fill="#e000e0"/><rect x="13" y="8" width="2" height="1" fill="#008000"/><rect x="15" y="8" width="1" height="1" fill="#000"/><rect x="3" y="9" width="2" height="1" fill="#e00000"/><rect x="7" y="9" width="2" height="1" fill="#0000b0"/><rect x="9" y="9" width="2" height="1" fill="#e000e0"/><rect x="13" y="9" width="2" height="1" fill="#008000"/><rect x="15" y="9" width="1" height="1" fill="#000"/><rect x="0" y="10" width="1" height="1" fill="#000"/><rect x="3" y="10" width="2" height="1" fill="#e00000"/><rect x="7" y="10" width="2" height="1" fill="#0000b0"/><rect x="9" y="10" width="2" height="1" fill="#e000e0"/><rect x="13" y="10" width="2" height="1" fill="#008000"/><rect x="15" y="10" width="1" height="1" fill="#000"/><rect x="3" y="11" width="2" height="1" fill="#e00000"/><rect x="7" y="11" width="2" height="1" fill="#0000b0"/><rect x="9" y="11" width="2" height="1" fill="#e000e0"/><rect x="13" y="11" width="2" height="1" fill="#008000"/><rect x="15" y="11" width="1" height="1" fill="#000"/><rect x="0" y="12" width="1" height="1" fill="#000"/><rect x="3" y="12" width="2" height="1" fill="#e00000"/><rect x="7" y="12" width="2" height="1" fill="#0000b0"/><rect x="9" y="12" width="2" height="1" fill="#e000e0"/><rect x="13" y="12" width="2" height="1" fill="#008000"/><rect x="15" y="12" width="1" height="1" fill="#000"/><rect x="3" y="13" width="2" height="1" fill="#e00000"/><rect x="7" y="13" width="2" height="1" fill="#0000b0"/><rect x="9" y="13" width="2" height="1" fill="#e000e0"/><rect x="13" y="13" width="2" height="1" fill="#008000"/><rect x="15" y="13" width="1" height="1" fill="#000"/><rect x="0" y="14" width="16" height="1" fill="#000"/><rect x="1" y="15" width="1" height="1" fill="#000"/><rect x="4" y="15" width="1" height="1" fill="#000"/><rect x="7" y="15" width="1" height="1" fill="#000"/><rect x="10" y="15" width="1" height="1" fill="#000"/><rect x="13" y="15" width="1" height="1" fill="#000"/></svg>
<div style="position:absolute;left:286px;top:62px;width:1px;height:17px;background:#a0a0a0"></div>
<div style="position:absolute;left:287px;top:62px;width:1px;height:17px;background:#ffffff"></div>
<svg style="position:absolute;left:294px;top:65px" width="16" height="12" viewBox="0 0 16 12" shape-rendering="crispEdges"><rect x="12" y="0" width="1" height="1" fill="#000000"/><rect x="5" y="1" width="2" height="1" fill="#000000"/><rect x="13" y="1" width="1" height="1" fill="#000000"/><rect x="5" y="2" width="2" height="1" fill="#000000"/><rect x="14" y="2" width="1" height="1" fill="#000000"/><rect x="4" y="3" width="1" height="1" fill="#000000"/><rect x="6" y="3" width="2" height="1" fill="#000000"/><rect x="15" y="3" width="1" height="1" fill="#000000"/><rect x="4" y="4" width="1" height="1" fill="#000000"/><rect x="6" y="4" width="2" height="1" fill="#000000"/><rect x="15" y="4" width="1" height="1" fill="#000000"/><rect x="3" y="5" width="1" height="1" fill="#000000"/><rect x="7" y="5" width="2" height="1" fill="#000000"/><rect x="15" y="5" width="1" height="1" fill="#000000"/><rect x="3" y="6" width="6" height="1" fill="#000000"/><rect x="15" y="6" width="1" height="1" fill="#000000"/><rect x="2" y="7" width="1" height="1" fill="#000000"/><rect x="7" y="7" width="2" height="1" fill="#000000"/><rect x="15" y="7" width="1" height="1" fill="#000000"/><rect x="1" y="8" width="1" height="1" fill="#000000"/><rect x="8" y="8" width="2" height="1" fill="#000000"/><rect x="15" y="8" width="1" height="1" fill="#000000"/><rect x="0" y="9" width="3" height="1" fill="#000000"/><rect x="7" y="9" width="4" height="1" fill="#000000"/><rect x="15" y="9" width="1" height="1" fill="#000000"/><rect x="15" y="10" width="1" height="1" fill="#000000"/><rect x="0" y="11" width="16" height="1" fill="#000000"/></svg>
<svg style="position:absolute;left:317px;top:63px" width="16" height="16" viewBox="0 0 16 16" shape-rendering="crispEdges"><rect x="0" y="0" width="10" height="1" fill="#000000"/><rect x="0" y="1" width="1" height="1" fill="#000000"/><rect x="9" y="1" width="2" height="1" fill="#000000"/><rect x="0" y="2" width="1" height="1" fill="#000000"/><rect x="9" y="2" width="1" height="1" fill="#000000"/><rect x="11" y="2" width="1" height="1" fill="#000000"/><rect x="0" y="3" width="1" height="1" fill="#000000"/><rect x="9" y="3" width="4" height="1" fill="#000000"/><rect x="0" y="4" width="1" height="1" fill="#000000"/><rect x="12" y="4" width="1" height="1" fill="#000000"/><rect x="0" y="5" width="1" height="1" fill="#000000"/><rect x="12" y="5" width="1" height="1" fill="#000000"/><rect x="0" y="6" width="1" height="1" fill="#000000"/><rect x="8" y="6" width="3" height="1" fill="#000000"/><rect x="12" y="6" width="1" height="1" fill="#000000"/><rect x="0" y="7" width="1" height="1" fill="#000000"/><rect x="7" y="7" width="1" height="1" fill="#000000"/><rect x="11" y="7" width="2" height="1" fill="#000000"/><rect x="0" y="8" width="1" height="1" fill="#000000"/><rect x="6" y="8" width="1" height="1" fill="#000000"/><rect x="12" y="8" width="1" height="1" fill="#000000"/><rect x="0" y="9" width="1" height="1" fill="#000000"/><rect x="6" y="9" width="1" height="1" fill="#000000"/><rect x="12" y="9" width="1" height="1" fill="#000000"/><rect x="0" y="10" width="1" height="1" fill="#000000"/><rect x="6" y="10" width="1" height="1" fill="#000000"/><rect x="12" y="10" width="1" height="1" fill="#000000"/><rect x="0" y="11" width="1" height="1" fill="#000000"/><rect x="7" y="11" width="1" height="1" fill="#000000"/><rect x="11" y="11" width="2" height="1" fill="#000000"/><rect x="0" y="12" width="1" height="1" fill="#000000"/><rect x="8" y="12" width="5" height="1" fill="#000000"/><rect x="0" y="13" width="1" height="1" fill="#000000"/><rect x="12" y="13" width="2" height="1" fill="#000000"/><rect x="0" y="14" width="15" height="1" fill="#000000"/><rect x="14" y="15" width="2" height="1" fill="#000000"/></svg>
<svg style="position:absolute;left:340px;top:69px" width="7" height="4" viewBox="0 0 7 4" shape-rendering="crispEdges"><rect x="0" y="0" width="7" height="1" fill="#000000"/><rect x="1" y="1" width="5" height="1" fill="#000000"/><rect x="2" y="2" width="3" height="1" fill="#000000"/><rect x="3" y="3" width="1" height="1" fill="#000000"/></svg>
<svg style="position:absolute;left:355px;top:64px" width="16" height="16" viewBox="0 0 16 16" shape-rendering="crispEdges"><rect x="4" y="0" width="9" height="1" fill="#000000"/><rect x="4" y="1" width="1" height="1" fill="#000000"/><rect x="12" y="1" width="2" height="1" fill="#000000"/><rect x="3" y="2" width="9" height="1" fill="#000000"/><rect x="13" y="2" width="1" height="1" fill="#000000"/><rect x="3" y="3" width="1" height="1" fill="#000000"/><rect x="5" y="3" width="5" height="1" fill="#000000"/><rect x="11" y="3" width="1" height="1" fill="#000000"/><rect x="13" y="3" width="2" height="1" fill="#000000"/><rect x="3" y="4" width="12" height="1" fill="#000000"/><rect x="1" y="5" width="12" height="1" fill="#000000"/><rect x="14" y="5" width="1" height="1" fill="#000000"/><rect x="0" y="6" width="2" height="1" fill="#000000"/><rect x="13" y="6" width="2" height="1" fill="#000000"/><rect x="0" y="7" width="1" height="1" fill="#000000"/><rect x="2" y="7" width="10" height="1" fill="#000000"/><rect x="13" y="7" width="2" height="1" fill="#000000"/><rect x="0" y="8" width="1" height="1" fill="#000000"/><rect x="13" y="8" width="2" height="1" fill="#000000"/><rect x="0" y="9" width="15" height="1" fill="#000000"/><rect x="0" y="10" width="1" height="1" fill="#000000"/><rect x="13" y="10" width="1" height="1" fill="#000000"/><rect x="0" y="11" width="1" height="1" fill="#000000"/><rect x="2" y="11" width="10" height="1" fill="#000000"/><rect x="13" y="11" width="1" height="1" fill="#000000"/><rect x="0" y="12" width="2" height="1" fill="#000000"/><rect x="12" y="12" width="2" height="1" fill="#000000"/><rect x="1" y="13" width="12" height="1" fill="#000000"/><rect x="1" y="14" width="1" height="1" fill="#000000"/><rect x="3" y="14" width="8" height="1" fill="#000000"/><rect x="12" y="14" width="1" height="1" fill="#000000"/><rect x="1" y="15" width="12" height="1" fill="#000000"/></svg>
<svg style="position:absolute;left:378px;top:69px" width="7" height="4" viewBox="0 0 7 4" shape-rendering="crispEdges"><rect x="0" y="0" width="7" height="1" fill="#000000"/><rect x="1" y="1" width="5" height="1" fill="#000000"/><rect x="2" y="2" width="3" height="1" fill="#000000"/><rect x="3" y="3" width="1" height="1" fill="#000000"/></svg>
<svg style="position:absolute;left:12px;top:9px" width="15" height="15" viewBox="0 0 15 15" shape-rendering="crispEdges"><rect x="0" y="0" width="15" height="1" fill="#1a3448"/><rect x="0" y="1" width="1" height="1" fill="#1a3448"/><rect x="1" y="1" width="1" height="1" fill="#f4dc70"/><rect x="2" y="1" width="5" height="1" fill="#f2b70c"/><rect x="7" y="1" width="1" height="1" fill="#0c1c30"/><rect x="8" y="1" width="6" height="1" fill="#1d5c98"/><rect x="14" y="1" width="1" height="1" fill="#1a3448"/><rect x="0" y="2" width="1" height="1" fill="#1a3448"/><rect x="1" y="2" width="1" height="1" fill="#f4dc70"/><rect x="2" y="2" width="5" height="1" fill="#f2b70c"/><rect x="7" y="2" width="1" height="1" fill="#0c1c30"/><rect x="8" y="2" width="6" height="1" fill="#1d5c98"/><rect x="14" y="2" width="1" height="1" fill="#1a3448"/><rect x="0" y="3" width="1" height="1" fill="#1a3448"/><rect x="1" y="3" width="1" height="1" fill="#f4dc70"/><rect x="2" y="3" width="5" height="1" fill="#f2b70c"/><rect x="7" y="3" width="1" height="1" fill="#0c1c30"/><rect x="8" y="3" width="6" height="1" fill="#1d5c98"/><rect x="14" y="3" width="1" height="1" fill="#1a3448"/><rect x="0" y="4" width="1" height="1" fill="#1a3448"/><rect x="1" y="4" width="1" height="1" fill="#f4dc70"/><rect x="2" y="4" width="5" height="1" fill="#f2b70c"/><rect x="7" y="4" width="1" height="1" fill="#0c1c30"/><rect x="8" y="4" width="6" height="1" fill="#1d5c98"/><rect x="14" y="4" width="1" height="1" fill="#1a3448"/><rect x="0" y="5" width="1" height="1" fill="#1a3448"/><rect x="1" y="5" width="1" height="1" fill="#f4dc70"/><rect x="2" y="5" width="5" height="1" fill="#f2b70c"/><rect x="7" y="5" width="1" height="1" fill="#0c1c30"/><rect x="8" y="5" width="6" height="1" fill="#1d5c98"/><rect x="14" y="5" width="1" height="1" fill="#1a3448"/><rect x="0" y="6" width="1" height="1" fill="#1a3448"/><rect x="1" y="6" width="1" height="1" fill="#f4dc70"/><rect x="2" y="6" width="5" height="1" fill="#f2b70c"/><rect x="7" y="6" width="1" height="1" fill="#0c1c30"/><rect x="8" y="6" width="6" height="1" fill="#1d5c98"/><rect x="14" y="6" width="1" height="1" fill="#1a3448"/><rect x="0" y="7" width="1" height="1" fill="#1a3448"/><rect x="1" y="7" width="1" height="1" fill="#f4dc70"/><rect x="2" y="7" width="5" height="1" fill="#f2b70c"/><rect x="7" y="7" width="1" height="1" fill="#0c1c30"/><rect x="8" y="7" width="6" height="1" fill="#1d5c98"/><rect x="14" y="7" width="1" height="1" fill="#1a3448"/><rect x="0" y="8" width="1" height="1" fill="#1a3448"/><rect x="1" y="8" width="1" height="1" fill="#f4dc70"/><rect x="2" y="8" width="5" height="1" fill="#f2b70c"/><rect x="7" y="8" width="1" height="1" fill="#0c1c30"/><rect x="8" y="8" width="6" height="1" fill="#1d5c98"/><rect x="14" y="8" width="1" height="1" fill="#1a3448"/><rect x="0" y="9" width="1" height="1" fill="#1a3448"/><rect x="1" y="9" width="1" height="1" fill="#f4dc70"/><rect x="2" y="9" width="5" height="1" fill="#f2b70c"/><rect x="7" y="9" width="1" height="1" fill="#0c1c30"/><rect x="8" y="9" width="6" height="1" fill="#1d5c98"/><rect x="14" y="9" width="1" height="1" fill="#1a3448"/><rect x="0" y="10" width="1" height="1" fill="#1a3448"/><rect x="1" y="10" width="1" height="1" fill="#f4dc70"/><rect x="2" y="10" width="5" height="1" fill="#f2b70c"/><rect x="7" y="10" width="7" height="1" fill="#0c1c30"/><rect x="14" y="10" width="1" height="1" fill="#1a3448"/><rect x="0" y="11" width="1" height="1" fill="#1a3448"/><rect x="1" y="11" width="1" height="1" fill="#f4dc70"/><rect x="2" y="11" width="12" height="1" fill="#e8c834"/><rect x="14" y="11" width="1" height="1" fill="#1a3448"/><rect x="0" y="12" width="1" height="1" fill="#1a3448"/><rect x="1" y="12" width="1" height="1" fill="#f4dc70"/><rect x="2" y="12" width="12" height="1" fill="#e8c834"/><rect x="14" y="12" width="1" height="1" fill="#1a3448"/><rect x="0" y="13" width="1" height="1" fill="#1a3448"/><rect x="1" y="13" width="13" height="1" fill="#f4dc70"/><rect x="14" y="13" width="1" height="1" fill="#1a3448"/><rect x="0" y="14" width="15" height="1" fill="#1a3448"/></svg>
<svg style="position:absolute;left:16px;top:33px" width="16" height="15" viewBox="0 0 16 15" shape-rendering="crispEdges"><rect x="0" y="0" width="16" height="1" fill="#1a3448"/><rect x="0" y="1" width="1" height="1" fill="#1a3448"/><rect x="1" y="1" width="1" height="1" fill="#f4dc70"/><rect x="2" y="1" width="6" height="1" fill="#f2b70c"/><rect x="8" y="1" width="1" height="1" fill="#0c1c30"/><rect x="9" y="1" width="6" height="1" fill="#1d5c98"/><rect x="15" y="1" width="1" height="1" fill="#1a3448"/><rect x="0" y="2" width="1" height="1" fill="#1a3448"/><rect x="1" y="2" width="1" height="1" fill="#f4dc70"/><rect x="2" y="2" width="6" height="1" fill="#f2b70c"/><rect x="8" y="2" width="1" height="1" fill="#0c1c30"/><rect x="9" y="2" width="6" height="1" fill="#1d5c98"/><rect x="15" y="2" width="1" height="1" fill="#1a3448"/><rect x="0" y="3" width="1" height="1" fill="#1a3448"/><rect x="1" y="3" width="1" height="1" fill="#f4dc70"/><rect x="2" y="3" width="6" height="1" fill="#f2b70c"/><rect x="8" y="3" width="1" height="1" fill="#0c1c30"/><rect x="9" y="3" width="6" height="1" fill="#1d5c98"/><rect x="15" y="3" width="1" height="1" fill="#1a3448"/><rect x="0" y="4" width="1" height="1" fill="#1a3448"/><rect x="1" y="4" width="1" height="1" fill="#f4dc70"/><rect x="2" y="4" width="6" height="1" fill="#f2b70c"/><rect x="8" y="4" width="1" height="1" fill="#0c1c30"/><rect x="9" y="4" width="6" height="1" fill="#1d5c98"/><rect x="15" y="4" width="1" height="1" fill="#1a3448"/><rect x="0" y="5" width="1" height="1" fill="#1a3448"/><rect x="1" y="5" width="1" height="1" fill="#f4dc70"/><rect x="2" y="5" width="6" height="1" fill="#f2b70c"/><rect x="8" y="5" width="1" height="1" fill="#0c1c30"/><rect x="9" y="5" width="6" height="1" fill="#1d5c98"/><rect x="15" y="5" width="1" height="1" fill="#1a3448"/><rect x="0" y="6" width="1" height="1" fill="#1a3448"/><rect x="1" y="6" width="1" height="1" fill="#f4dc70"/><rect x="2" y="6" width="6" height="1" fill="#f2b70c"/><rect x="8" y="6" width="1" height="1" fill="#0c1c30"/><rect x="9" y="6" width="6" height="1" fill="#1d5c98"/><rect x="15" y="6" width="1" height="1" fill="#1a3448"/><rect x="0" y="7" width="1" height="1" fill="#1a3448"/><rect x="1" y="7" width="1" height="1" fill="#f4dc70"/><rect x="2" y="7" width="6" height="1" fill="#f2b70c"/><rect x="8" y="7" width="1" height="1" fill="#0c1c30"/><rect x="9" y="7" width="6" height="1" fill="#1d5c98"/><rect x="15" y="7" width="1" height="1" fill="#1a3448"/><rect x="0" y="8" width="1" height="1" fill="#1a3448"/><rect x="1" y="8" width="1" height="1" fill="#f4dc70"/><rect x="2" y="8" width="6" height="1" fill="#f2b70c"/><rect x="8" y="8" width="1" height="1" fill="#0c1c30"/><rect x="9" y="8" width="6" height="1" fill="#1d5c98"/><rect x="15" y="8" width="1" height="1" fill="#1a3448"/><rect x="0" y="9" width="1" height="1" fill="#1a3448"/><rect x="1" y="9" width="1" height="1" fill="#f4dc70"/><rect x="2" y="9" width="6" height="1" fill="#f2b70c"/><rect x="8" y="9" width="1" height="1" fill="#0c1c30"/><rect x="9" y="9" width="6" height="1" fill="#1d5c98"/><rect x="15" y="9" width="1" height="1" fill="#1a3448"/><rect x="0" y="10" width="1" height="1" fill="#1a3448"/><rect x="1" y="10" width="1" height="1" fill="#f4dc70"/><rect x="2" y="10" width="6" height="1" fill="#f2b70c"/><rect x="8" y="10" width="7" height="1" fill="#0c1c30"/><rect x="15" y="10" width="1" height="1" fill="#1a3448"/><rect x="0" y="11" width="1" height="1" fill="#1a3448"/><rect x="1" y="11" width="1" height="1" fill="#f4dc70"/><rect x="2" y="11" width="13" height="1" fill="#e8c834"/><rect x="15" y="11" width="1" height="1" fill="#1a3448"/><rect x="0" y="12" width="1" height="1" fill="#1a3448"/><rect x="1" y="12" width="1" height="1" fill="#f4dc70"/><rect x="2" y="12" width="13" height="1" fill="#e8c834"/><rect x="15" y="12" width="1" height="1" fill="#1a3448"/><rect x="0" y="13" width="1" height="1" fill="#1a3448"/><rect x="1" y="13" width="14" height="1" fill="#f4dc70"/><rect x="15" y="13" width="1" height="1" fill="#1a3448"/><rect x="0" y="14" width="16" height="1" fill="#1a3448"/></svg>
</body></html>
